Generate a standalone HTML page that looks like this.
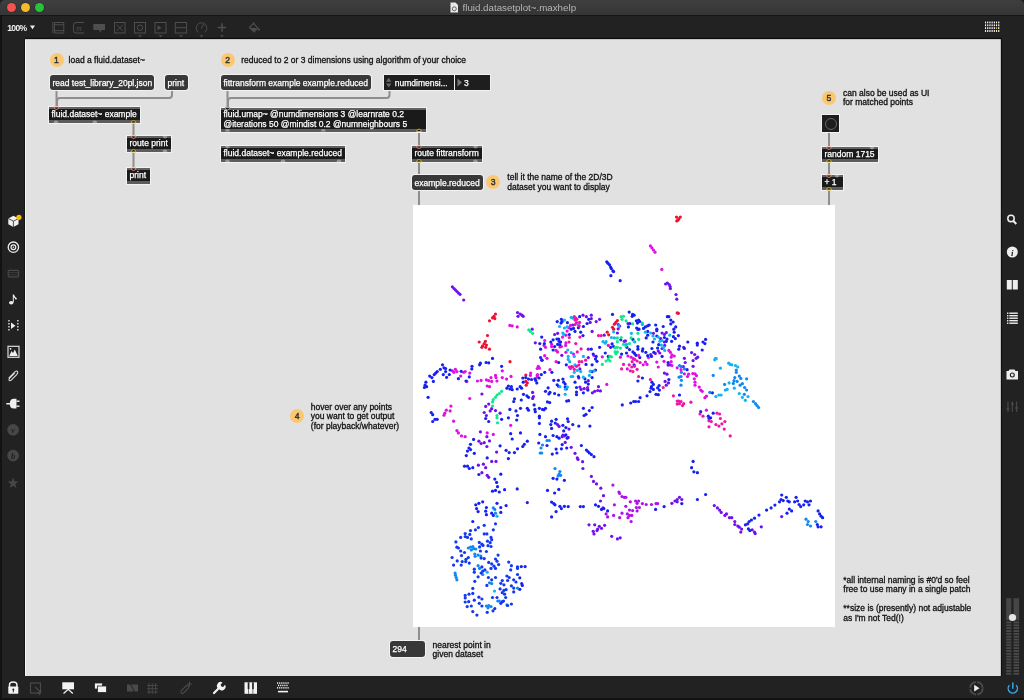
<!DOCTYPE html>
<html><head><meta charset="utf-8">
<style>
*{margin:0;padding:0;box-sizing:border-box}
html,body{-webkit-font-smoothing:antialiased;width:1024px;height:700px;overflow:hidden;background:#1e1e1e;font-family:"Liberation Sans",sans-serif}
.a{position:absolute}
#wrap{position:absolute;left:0;top:0;width:1024px;height:700px;will-change:transform}
#title{left:0;top:0;width:1024px;height:16px;background:linear-gradient(#3f3f3f,#353535);border-bottom:1px solid #151515;border-radius:5px 5px 0 0}
#tool{left:0;top:16px;width:1024px;height:23px;background:#222}
#canvas{left:25px;top:39px;width:976px;height:637px;background:#e1e1e1;border-top:1.5px solid #f6f6f6;border-left:1.5px solid #f6f6f6;border-right:1.3px solid #efefef}
#lside{left:0;top:39px;width:25px;height:637px;background:#222}
#rside{left:1001px;top:39px;width:23px;height:637px;background:#222}
#bot{left:0;top:676px;width:1024px;height:24px;background:#222}
.tl{width:9px;height:9px;border-radius:50%;top:3.2px;box-shadow:0 0 0 0.5px rgba(0,0,0,0.35)}
.t{font-size:8.5px;color:#111;white-space:nowrap;line-height:9.5px;-webkit-text-stroke:0.3px #111}
.num{width:14px;height:14px;border-radius:50%;background:#fac873;font-size:8.6px;color:#333;text-align:center;line-height:14px;-webkit-text-stroke:0.45px #333}
.msg{background:#383838;border-radius:3px;box-shadow:0 0 0 1px #f2f2f2;color:#fff;-webkit-text-stroke:0.25px #fff;font-size:8.5px;line-height:15px;padding-top:0.7px;padding-left:2.5px;white-space:nowrap}
.obj{background:#1a1a1a;border-top:2.6px solid #626262;border-bottom:3px solid #5c5c5c;padding-top:0.6px;box-shadow:0 0 0 1px #f2f2f2;color:#fff;-webkit-text-stroke:0.25px #fff;font-size:8.5px;line-height:9.5px;padding-left:2.5px;white-space:nowrap}
.cord{background:#8e8e8e}
.dot{position:absolute;width:3px;height:3px;border-radius:50%}
</style></head><body><div id="wrap">
<div id="title" class="a"></div>
<div class="a tl" style="left:6.5px;background:#f4544d"></div>
<div class="a tl" style="left:20.5px;background:#f5bb2c"></div>
<div class="a tl" style="left:35px;background:#26c33a"></div>
<div class="a" style="left:462.5px;top:2px;font-size:9.75px;color:#b5b5b5;white-space:nowrap">fluid.datasetplot~.maxhelp</div>
<div id="tool" class="a"></div>
<div class="a" style="left:7.2px;top:22.5px;font-size:8.6px;font-weight:bold;letter-spacing:-0.65px;color:#f0f0f0;white-space:nowrap">100%</div><svg class="a" style="left:29px;top:24px" width="7" height="7"><path d="M1 1.5 H6 L3.5 5.2Z" fill="#f0f0f0"/></svg>
<div id="lside" class="a"></div>
<div id="rside" class="a"></div>
<div id="bot" class="a"></div>
<div id="canvas" class="a"></div>

<!--CHROME-->
<svg class="a" style="left:0;top:0" width="1024" height="700" viewBox="0 0 1024 700">
<!-- window left border -->
<rect x="0" y="15" width="2" height="685" fill="#121212"/>
<rect x="24" y="39" width="1" height="637" fill="#151515"/>
<rect x="25" y="37.8" width="977" height="1.4" fill="#0e0e0e"/><rect x="1000.8" y="39" width="1.2" height="637" fill="#0e0e0e"/>
<rect x="0" y="698" width="1024" height="2" fill="#121212"/>
<!-- title doc icon -->
<path d="M450.5 2.5 H455.5 L458 5 V12.5 H450.5 Z" fill="#e8e8e8"/>
<circle cx="454.3" cy="8.8" r="2" fill="none" stroke="#555" stroke-width="0.9"/>
<!-- toolbar icons -->
<g fill="none" stroke="#4e4e4e" stroke-width="1">
<path d="M52.8 22 V33"/>
<path d="M54.5 22.5 H63.8 M54.5 24.8 H63.8 M54.5 30.7 H63.8 M54.5 33 H63.8 M63.8 22.5 V33 M54.5 22.5 V33"/>
<path d="M84 22.5 H76 Q73.5 22.5 73.5 25 V30.5 Q73.5 33 76 33 H84"/>
<rect x="114.5" y="22.5" width="10.5" height="10.5"/>
<path d="M116.8 24.8 L122.7 30.7 M122.7 24.8 L116.8 30.7"/>
<rect x="134.5" y="22.5" width="11" height="10.5"/>
<circle cx="140" cy="27.7" r="2.7"/>
<rect x="155" y="22.5" width="11" height="10.5"/>
<rect x="175.3" y="22.5" width="11.3" height="10.5"/>
<path d="M175.3 27.7 H186.6"/>
<path d="M198.3 32.3 A5.3 5.3 0 1 1 204.7 32.3"/>
<path d="M201.2 28.5 L203.6 24"/>
<path d="M222 23.3 V31.7 M217.8 27.5 H226.2" stroke-width="1.5"/>
</g>
<g fill="#4e4e4e">
<text x="76.2" y="30.8" font-family="Liberation Serif" font-style="italic" font-size="7.5" fill="#4e4e4e">m</text>
<path d="M93.3 24 H105 V30 H101.5 L100.5 32.5 L99 30 H93.3Z"/>
<path d="M157.5 25.2 L161.5 27.7 L157.5 30.2Z"/>
<path d="M138 35.3 H142 L140 37.3Z M158.5 35.3 H162.5 L160.5 37.3Z M179 35.3 H183 L181 37.3Z M199.5 35.3 H203.5 L201.5 37.3Z M220 35.3 H224 L222 37.3Z"/>
<path d="M249.5 27.5 L253.5 23.5 L258 28 L254 32 Z" fill="none" stroke="#4e4e4e" stroke-width="1.1"/>
<path d="M250.5 28 H257 L254 31.2Z"/>
<path d="M253 22 L254.5 23.5" stroke="#4e4e4e" stroke-width="1"/>
<circle cx="259" cy="29.5" r="1.1"/>
</g>
<!-- grid icon right -->
<rect x="983.8" y="20.6" width="15.6" height="11.6" rx="1" fill="#151515"/>
<g fill="#f4f4f4">
<rect x="984.90" y="21.50" width="1.25" height="1.9" fill="#f2f2f2"/><rect x="987.10" y="21.50" width="1.25" height="1.9" fill="#f2f2f2"/><rect x="989.30" y="21.50" width="1.25" height="1.9" fill="#f2f2f2"/><rect x="991.50" y="21.50" width="1.25" height="1.9" fill="#f2f2f2"/><rect x="993.70" y="21.50" width="1.25" height="1.9" fill="#f2f2f2"/><rect x="995.90" y="21.50" width="1.25" height="1.9" fill="#f2f2f2"/><rect x="998.10" y="21.50" width="1.25" height="1.9" fill="#f2f2f2"/><rect x="984.90" y="24.35" width="1.25" height="1.9" fill="#f2f2f2"/><rect x="987.10" y="24.35" width="1.25" height="1.9" fill="#f2f2f2"/><rect x="989.30" y="24.35" width="1.25" height="1.9" fill="#f2f2f2"/><rect x="991.50" y="24.35" width="1.25" height="1.9" fill="#f2f2f2"/><rect x="993.70" y="24.35" width="1.25" height="1.9" fill="#f2f2f2"/><rect x="995.90" y="24.35" width="1.25" height="1.9" fill="#f2f2f2"/><rect x="998.10" y="24.35" width="1.25" height="1.9" fill="#f2f2f2"/><rect x="984.90" y="27.20" width="1.25" height="1.9" fill="#f2f2f2"/><rect x="987.10" y="27.20" width="1.25" height="1.9" fill="#f2f2f2"/><rect x="989.30" y="27.20" width="1.25" height="1.9" fill="#f2f2f2"/><rect x="991.50" y="27.20" width="1.25" height="1.9" fill="#f2f2f2"/><rect x="993.70" y="27.20" width="1.25" height="1.9" fill="#f2f2f2"/><rect x="995.90" y="27.20" width="1.25" height="1.9" fill="#f5b300"/><rect x="998.10" y="27.20" width="1.25" height="1.9" fill="#f2f2f2"/><rect x="984.90" y="30.05" width="1.25" height="1.9" fill="#f2f2f2"/><rect x="987.10" y="30.05" width="1.25" height="1.9" fill="#f2f2f2"/><rect x="989.30" y="30.05" width="1.25" height="1.9" fill="#f2f2f2"/><rect x="991.50" y="30.05" width="1.25" height="1.9" fill="#f2f2f2"/><rect x="993.70" y="30.05" width="1.25" height="1.9" fill="#f2f2f2"/><rect x="995.90" y="30.05" width="1.25" height="1.9" fill="#f2f2f2"/><rect x="998.10" y="30.05" width="1.25" height="1.9" fill="#f2f2f2"/>
</g>
<!-- left sidebar icons -->
<g fill="#f0f0f0">
<path d="M13.4 215.8 L18.5 218.5 V224.3 L13.4 227 L8.3 224.3 V218.5Z"/>
</g>
<path d="M8.3 218.5 L13.4 221.2 L18.5 218.5 M13.4 221.2 V227" fill="none" stroke="#222" stroke-width="0.8"/>
<circle cx="18.9" cy="217.3" r="2.6" fill="#f5c000"/>
<circle cx="13.4" cy="247.2" r="5.2" fill="none" stroke="#eee" stroke-width="1.3"/>
<circle cx="13.4" cy="247.2" r="2.4" fill="none" stroke="#eee" stroke-width="1.2"/>
<circle cx="13.4" cy="247.2" r="0.8" fill="#eee"/>
<rect x="8.2" y="270.3" width="10.5" height="6.5" rx="1" fill="none" stroke="#484848" stroke-width="1.2"/>
<path d="M8.2 272.5 H18.7 M8.2 274.6 H18.7" stroke="#484848" stroke-width="0.6"/>
<g fill="#eee">
<ellipse cx="11.2" cy="302.8" rx="2.2" ry="1.7"/>
<path d="M12.8 302.5 V294.5 L13.8 294.5 Q15 297 17 298.5 Q16.5 300 15.5 299.5 Q14.5 297.8 13.8 297.2 V302.5Z"/>
<path d="M8.3 320 h1.3 v1.5 h-1.3z M8.3 323 h1.3 v1.5 h-1.3z M8.3 326 h1.3 v1.5 h-1.3z M8.3 329 h1.3 v1.5 h-1.3z M17.2 320 h1.3 v1.5 h-1.3z M17.2 323 h1.3 v1.5 h-1.3z M17.2 326 h1.3 v1.5 h-1.3z M17.2 329 h1.3 v1.5 h-1.3z"/>
<path d="M11 322.5 L15.5 325.7 L11 329Z"/>
</g>
<rect x="8" y="346.3" width="11" height="11" fill="none" stroke="#ddd" stroke-width="1.2"/>
<path d="M9.2 356 L11.5 351 L13 353 L14.8 349.5 L17.8 356Z" fill="#eee"/>
<circle cx="10.5" cy="348.8" r="0.9" fill="#eee"/>
<path d="M10 380 L16.5 373.5 Q18.2 372 19 373.5 Q19.5 375 18 376.5 L12.5 382 Q11.3 383 10.5 382.2 Q9.8 381.3 11 380 L16 375" fill="none" stroke="#ddd" stroke-width="1.1" transform="translate(-1.3,-1.8)"/>
<g fill="#f0f0f0">
<path d="M16.5 398.8 H13.8 Q9.8 398.8 9.8 403.7 Q9.8 408.6 13.8 408.6 H16.5Z"/>
<rect x="16.5" y="400.5" width="3" height="1.4"/>
<rect x="16.5" y="405.5" width="3" height="1.4"/>
<rect x="6.3" y="403" width="4.5" height="1.5"/>
</g>
<circle cx="13.1" cy="429.8" r="5.5" fill="#474747" stroke="#4a4a4a" stroke-width="0.6"/>
<text x="13.1" y="432.8" text-anchor="middle" font-family="Liberation Serif" font-style="italic" font-weight="bold" font-size="8" fill="#222">v</text>
<circle cx="13.1" cy="455.5" r="5.5" fill="#474747" stroke="#4a4a4a" stroke-width="0.6"/>
<text x="13.1" y="458.8" text-anchor="middle" font-family="Liberation Serif" font-style="italic" font-weight="bold" font-size="8.5" fill="#222">b</text>
<path d="M13.1 477.5 L14.5 481.3 L18.5 481.5 L15.3 484 L16.4 488 L13.1 485.7 L9.8 488 L10.9 484 L7.7 481.5 L11.7 481.3Z" fill="#464646"/>
<!-- right sidebar icons -->
<g fill="none" stroke="#eee" stroke-width="1.5">
<circle cx="1011" cy="218.5" r="3.2"/>
<path d="M1013.4 221 L1016.3 224" stroke-width="2"/>
</g>
<circle cx="1012.3" cy="252" r="5.5" fill="#eee"/>
<text x="1012.3" y="255.8" text-anchor="middle" font-family="Liberation Serif" font-style="italic" font-weight="bold" font-size="9" fill="#222">i</text>
<path d="M1006.8 280 H1011.8 V289.5 H1006.8Z M1012.8 280 H1017.8 V289.5 H1012.8Z" fill="#eee"/>
<g fill="#eee">
<rect x="1007" y="312.5" width="1.4" height="1.4"/><rect x="1009.3" y="312.5" width="8.5" height="1.4"/>
<rect x="1007" y="315" width="1.4" height="1.4"/><rect x="1009.3" y="315" width="8.5" height="1.4"/>
<rect x="1007" y="317.5" width="1.4" height="1.4"/><rect x="1009.3" y="317.5" width="8.5" height="1.4"/>
<rect x="1007" y="320" width="1.4" height="1.4"/><rect x="1009.3" y="320" width="8.5" height="1.4"/>
<rect x="1007" y="322.5" width="1.4" height="1.4"/><rect x="1009.3" y="322.5" width="8.5" height="1.4"/>
</g>
<path d="M1006.5 371 H1008.5 L1009.5 369.5 H1014.5 L1015.5 371 H1018 V379.5 H1006.5Z" fill="#eee"/>
<circle cx="1012.3" cy="375" r="2.5" fill="#222"/>
<circle cx="1012.3" cy="375" r="1.4" fill="#eee"/>
<g stroke="#4a4a4a" stroke-width="1.1">
<path d="M1008 401.5 V412 M1012.3 401.5 V412 M1016.6 401.5 V412"/>
<path d="M1006.6 409 H1009.4 M1010.9 404 H1013.7 M1015.2 408 H1018" stroke-width="1.6"/>
</g>
<!-- meter -->
<rect x="1006.2" y="598.2" width="5.1" height="22" fill="#464646"/>
<rect x="1013.6" y="598.2" width="5.5" height="22" fill="#464646"/>
<rect x="1006.2" y="621.5" width="5.1" height="1.9" fill="#4a4a4a"/><rect x="1013.6" y="621.5" width="5.5" height="1.9" fill="#4a4a4a"/><rect x="1006.2" y="624.4" width="5.1" height="1.9" fill="#4a4a4a"/><rect x="1013.6" y="624.4" width="5.5" height="1.9" fill="#4a4a4a"/><rect x="1006.2" y="627.2" width="5.1" height="1.9" fill="#4a4a4a"/><rect x="1013.6" y="627.2" width="5.5" height="1.9" fill="#4a4a4a"/><rect x="1006.2" y="630.1" width="5.1" height="1.9" fill="#4a4a4a"/><rect x="1013.6" y="630.1" width="5.5" height="1.9" fill="#4a4a4a"/><rect x="1006.2" y="632.9" width="5.1" height="1.9" fill="#4a4a4a"/><rect x="1013.6" y="632.9" width="5.5" height="1.9" fill="#4a4a4a"/><rect x="1006.2" y="635.8" width="5.1" height="1.9" fill="#4a4a4a"/><rect x="1013.6" y="635.8" width="5.5" height="1.9" fill="#4a4a4a"/><rect x="1006.2" y="638.6" width="5.1" height="1.9" fill="#4a4a4a"/><rect x="1013.6" y="638.6" width="5.5" height="1.9" fill="#4a4a4a"/><rect x="1006.2" y="641.5" width="5.1" height="1.9" fill="#4a4a4a"/><rect x="1013.6" y="641.5" width="5.5" height="1.9" fill="#4a4a4a"/><rect x="1006.2" y="644.3" width="5.1" height="1.9" fill="#4a4a4a"/><rect x="1013.6" y="644.3" width="5.5" height="1.9" fill="#4a4a4a"/><rect x="1006.2" y="647.2" width="5.1" height="1.9" fill="#4a4a4a"/><rect x="1013.6" y="647.2" width="5.5" height="1.9" fill="#4a4a4a"/><rect x="1006.2" y="650.0" width="5.1" height="1.9" fill="#4a4a4a"/><rect x="1013.6" y="650.0" width="5.5" height="1.9" fill="#4a4a4a"/><rect x="1006.2" y="652.9" width="5.1" height="1.9" fill="#4a4a4a"/><rect x="1013.6" y="652.9" width="5.5" height="1.9" fill="#4a4a4a"/><rect x="1006.2" y="655.7" width="5.1" height="1.9" fill="#4a4a4a"/><rect x="1013.6" y="655.7" width="5.5" height="1.9" fill="#4a4a4a"/><rect x="1006.2" y="658.6" width="5.1" height="1.9" fill="#4a4a4a"/><rect x="1013.6" y="658.6" width="5.5" height="1.9" fill="#4a4a4a"/><rect x="1006.2" y="661.4" width="5.1" height="1.9" fill="#4a4a4a"/><rect x="1013.6" y="661.4" width="5.5" height="1.9" fill="#4a4a4a"/><rect x="1006.2" y="664.3" width="5.1" height="1.9" fill="#4a4a4a"/><rect x="1013.6" y="664.3" width="5.5" height="1.9" fill="#4a4a4a"/><rect x="1006.2" y="667.1" width="5.1" height="1.9" fill="#4a4a4a"/><rect x="1013.6" y="667.1" width="5.5" height="1.9" fill="#4a4a4a"/><rect x="1006.2" y="670.0" width="5.1" height="1.9" fill="#4a4a4a"/><rect x="1013.6" y="670.0" width="5.5" height="1.9" fill="#4a4a4a"/><rect x="1006.2" y="672.8" width="5.1" height="1.9" fill="#4a4a4a"/><rect x="1013.6" y="672.8" width="5.5" height="1.9" fill="#4a4a4a"/>
<circle cx="1012.5" cy="617.5" r="3.6" fill="#e6e6e6"/>
<!-- play + power -->
<circle cx="976.4" cy="688.2" r="6.3" fill="none" stroke="#4a4a4a" stroke-width="2" stroke-dasharray="8.5 1.4"/>
<path d="M974.2 684.8 L979.5 688.2 L974.2 691.6Z" fill="#f0f0f0"/>
<path d="M1009.4 685.3 A4.6 4.6 0 1 0 1016.2 685.3" fill="none" stroke="#3aa5e6" stroke-width="1.5"/>
<path d="M1012.8 682.5 V688.8" stroke="#3aa5e6" stroke-width="1.5"/>
<!-- bottom toolbar icons -->
<g fill="#f2f2f2">
<path d="M9.5 687 V685 Q9.5 682 13.2 682 Q16.9 682 16.9 685 V687" fill="none" stroke="#f2f2f2" stroke-width="1.5"/>
<rect x="8.3" y="686.5" width="10" height="7.3" rx="0.8"/>
</g>
<circle cx="13.3" cy="689.6" r="1" fill="#222"/><rect x="12.9" y="689.8" width="0.9" height="2.5" fill="#222"/>
<rect x="30.5" y="683" width="10" height="10" fill="none" stroke="#4a4a4a" stroke-width="1.2"/>
<path d="M35 687 L40.5 692 L38 692.5 L40 695" stroke="#4a4a4a" stroke-width="1.1" fill="none"/>
<rect x="62.3" y="682.3" width="11.7" height="7" fill="#f2f2f2"/>
<path d="M63.5 693.5 L68.2 689.3 L72.8 693.5" stroke="#f2f2f2" stroke-width="1.3" fill="none"/>
<rect x="94.5" y="683" width="8" height="6" fill="#f2f2f2" stroke="#222" stroke-width="0.8"/>
<rect x="97.5" y="686" width="9" height="6.5" fill="#f2f2f2" stroke="#222" stroke-width="0.8"/>
<rect x="127" y="684.5" width="11" height="7" fill="#4a4a4a"/>
<path d="M130 683 L135.5 694" stroke="#222" stroke-width="1"/>
<path d="M149 683 V694 M152.3 683 V694 M155.6 683 V694 M147 685.5 H158 M147 688.7 H158 M147 692 H158" stroke="#4a4a4a" stroke-width="0.9"/>
<path d="M181 691 L186 686 Q187.5 684.7 188.5 686 Q189.3 687.2 188 688.5 L183.5 693 Q182.3 694 181.3 693 Q180.5 692 181.5 691" fill="none" stroke="#4a4a4a" stroke-width="1.1"/>
<path d="M189.5 681.5 V686.5 M187 684 H192" stroke="#4a4a4a" stroke-width="1.1"/>
<path d="M214 693 L220 687" stroke="#f2f2f2" stroke-width="2.2" stroke-linecap="round"/>
<path d="M218.6 688.6 A3.4 3.4 0 0 1 222.5 682.6 L220.6 684.8 L221.4 686.4 L223.2 686.9 L225 684.8 A3.4 3.4 0 0 1 218.6 688.6Z" fill="#f2f2f2"/>
<rect x="244.5" y="682.3" width="12.5" height="11.5" fill="#f2f2f2"/>
<rect x="247.7" y="682.3" width="1.7" height="6.8" fill="#222"/><rect x="252.1" y="682.3" width="1.7" height="6.8" fill="#222"/>
<path d="M248.5 689 V693.8 M252.9 689 V693.8" stroke="#222" stroke-width="0.6"/>
<rect x="277.0" y="682.3" width="1.2" height="1.5" fill="#f2f2f2"/><rect x="279.1" y="682.3" width="1.2" height="1.5" fill="#f2f2f2"/><rect x="281.2" y="682.3" width="1.2" height="1.5" fill="#f2f2f2"/><rect x="283.3" y="682.3" width="1.2" height="1.5" fill="#f2f2f2"/><rect x="285.4" y="682.3" width="1.2" height="1.5" fill="#f2f2f2"/><rect x="287.5" y="682.3" width="1.2" height="1.5" fill="#f2f2f2"/><rect x="278.0" y="684.7" width="1.2" height="1.5" fill="#f2f2f2"/><rect x="280.1" y="684.7" width="1.2" height="1.5" fill="#f2f2f2"/><rect x="282.2" y="684.7" width="1.2" height="1.5" fill="#f2f2f2"/><rect x="284.3" y="684.7" width="1.2" height="1.5" fill="#f2f2f2"/><rect x="286.4" y="684.7" width="1.2" height="1.5" fill="#f2f2f2"/><rect x="277.0" y="687.1" width="1.2" height="1.5" fill="#f2f2f2"/><rect x="279.1" y="687.1" width="1.2" height="1.5" fill="#f2f2f2"/><rect x="281.2" y="687.1" width="1.2" height="1.5" fill="#f2f2f2"/><rect x="283.3" y="687.1" width="1.2" height="1.5" fill="#f2f2f2"/><rect x="285.4" y="687.1" width="1.2" height="1.5" fill="#f2f2f2"/><rect x="287.5" y="687.1" width="1.2" height="1.5" fill="#f2f2f2"/>
<rect x="278" y="690.8" width="10" height="1.6" fill="#f2f2f2"/>
</svg>
<!--/CHROME-->


<!-- cords -->
<svg class="a" style="left:0;top:0" width="1024" height="700" viewBox="0 0 1024 700">
<g fill="none" stroke="#8e8e8e" stroke-width="2">
<path d="M56.5 90 V107"/>
<path d="M172 90 V95 Q172 98 169 98 H60 Q57 98 57 101 V107"/>
<path d="M133.5 123 V136"/>
<path d="M133.5 152 V168"/>
<path d="M227.5 90 V107"/>
<path d="M389.5 90 V95 Q389.5 98 386.5 98 H231 Q228 98 228 101 V107"/>
<path d="M419 131 V146"/>
<path d="M419 162 V174.5"/>
<path d="M419 190 V205"/>
<path d="M419 627 V641"/>
<path d="M829 132 V147"/>
<path d="M829 162 V175"/>
<path d="M829 190 V205"/>
</g>
</svg>
<!-- numbers -->
<div class="a num" style="left:49.5px;top:53px">1</div>
<div class="a num" style="left:220.6px;top:53.4px">2</div>
<div class="a num" style="left:486.2px;top:174.6px">3</div>
<div class="a num" style="left:290.1px;top:409px">4</div>
<div class="a num" style="left:822px;top:91px">5</div>
<!-- comments -->
<div class="a t" style="left:68.6px;top:55.5px">load a fluid.dataset~</div>
<div class="a t" style="left:241.2px;top:55.5px">reduced to 2 or 3 dimensions using algorithm of your choice</div>
<div class="a t" style="left:507.3px;top:173px">tell it the name of the 2D/3D<br>dataset you want to display</div>
<div class="a t" style="left:310.8px;top:402.5px">hover over any points<br>you want to get output<br>(for playback/whatever)</div>
<div class="a t" style="left:843px;top:88.5px">can also be used as UI<br>for matched points</div>
<div class="a t" style="left:843.3px;top:575.5px">*all internal naming is #0'd so feel<br>free to use many in a single patch<br><br>**size is (presently) not adjustable<br>as I'm not Ted(!)</div>
<div class="a t" style="left:432.6px;top:640.5px">nearest point in<br>given dataset</div>
<!-- messages -->
<div class="a msg" style="left:50px;top:75px;width:104px;height:15px">read test_library_20pl.json</div>
<div class="a msg" style="left:165px;top:75px;width:23px;height:15px">print</div>
<div class="a msg" style="left:221px;top:75px;width:150px;height:15px">fittransform example example.reduced</div>
<div class="a msg" style="left:412px;top:175px;width:71px;height:15px">example.reduced</div>
<div class="a msg" style="left:390px;top:641px;width:35px;height:16px">294</div>
<!-- objects -->
<div class="a obj" style="left:49px;top:107px;width:91px;height:16px">fluid.dataset~ example</div>
<div class="a obj" style="left:127px;top:136px;width:44px;height:16px">route print</div>
<div class="a obj" style="left:127px;top:168px;width:23px;height:15.5px">print</div>
<div class="a obj" style="left:221px;top:107.5px;width:205px;height:24px">fluid.umap~ @numdimensions 3 @learnrate 0.2<br>@iterations 50 @mindist 0.2 @numneighbours 5</div>
<div class="a obj" style="left:221px;top:146px;width:124px;height:16px">fluid.dataset~ example.reduced</div>
<div class="a obj" style="left:412px;top:146px;width:69.5px;height:16px">route fittransform</div>
<div class="a obj" style="left:822px;top:147px;width:56px;height:15px">random 1715</div>
<div class="a obj" style="left:822px;top:175px;width:21px;height:15px">+ 1</div>
<!--IO-->
<svg class="a" style="left:0;top:0" width="1024" height="700" viewBox="0 0 1024 700">
<path d="M54.1 107.0 A2.4 2.4 0 0 0 58.9 107.0Z" fill="#1a1a1a" stroke="#e8927a" stroke-width="0.9"/>
<path d="M53.6 123.0 A2.4 2.4 0 0 1 58.4 123.0Z" fill="#9a9a9a"/>
<path d="M92.4 123.0 A2.4 2.4 0 0 1 97.2 123.0Z" fill="#9a9a9a"/>
<path d="M131.1 123.0 A2.4 2.4 0 0 1 135.9 123.0Z" fill="#1a1a1a" stroke="#e0b830" stroke-width="0.9"/>
<path d="M131.1 136.0 A2.4 2.4 0 0 0 135.9 136.0Z" fill="#1a1a1a" stroke="#e8927a" stroke-width="0.9"/>
<path d="M162.6 136.0 A2.4 2.4 0 0 0 167.4 136.0Z" fill="#9a9a9a"/>
<path d="M131.1 152.0 A2.4 2.4 0 0 1 135.9 152.0Z" fill="#1a1a1a" stroke="#e0b830" stroke-width="0.9"/>
<path d="M162.6 152.0 A2.4 2.4 0 0 1 167.4 152.0Z" fill="#9a9a9a"/>
<path d="M131.1 168.0 A2.4 2.4 0 0 0 135.9 168.0Z" fill="#1a1a1a" stroke="#e8927a" stroke-width="0.9"/>
<path d="M225.1 107.5 A2.4 2.4 0 0 0 229.9 107.5Z" fill="#1a1a1a" stroke="#e8927a" stroke-width="0.9"/>
<path d="M225.1 131.5 A2.4 2.4 0 0 1 229.9 131.5Z" fill="#9a9a9a"/>
<path d="M320.9 131.5 A2.4 2.4 0 0 1 325.7 131.5Z" fill="#9a9a9a"/>
<path d="M416.6 131.5 A2.4 2.4 0 0 1 421.4 131.5Z" fill="#1a1a1a" stroke="#e0b830" stroke-width="0.9"/>
<path d="M225.1 146.0 A2.4 2.4 0 0 0 229.9 146.0Z" fill="#9a9a9a"/>
<path d="M225.1 162.0 A2.4 2.4 0 0 1 229.9 162.0Z" fill="#9a9a9a"/>
<path d="M280.6 162.0 A2.4 2.4 0 0 1 285.4 162.0Z" fill="#9a9a9a"/>
<path d="M336.6 162.0 A2.4 2.4 0 0 1 341.4 162.0Z" fill="#9a9a9a"/>
<path d="M416.6 146.0 A2.4 2.4 0 0 0 421.4 146.0Z" fill="#1a1a1a" stroke="#e8927a" stroke-width="0.9"/>
<path d="M473.1 146.0 A2.4 2.4 0 0 0 477.9 146.0Z" fill="#9a9a9a"/>
<path d="M416.6 162.0 A2.4 2.4 0 0 1 421.4 162.0Z" fill="#1a1a1a" stroke="#e0b830" stroke-width="0.9"/>
<path d="M473.1 162.0 A2.4 2.4 0 0 1 477.9 162.0Z" fill="#9a9a9a"/>
<path d="M826.6 147.0 A2.4 2.4 0 0 0 831.4 147.0Z" fill="#1a1a1a" stroke="#e8927a" stroke-width="0.9"/>
<path d="M869.6 147.0 A2.4 2.4 0 0 0 874.4 147.0Z" fill="#9a9a9a"/>
<path d="M826.6 162.0 A2.4 2.4 0 0 1 831.4 162.0Z" fill="#1a1a1a" stroke="#e0b830" stroke-width="0.9"/>
<path d="M826.6 175.0 A2.4 2.4 0 0 0 831.4 175.0Z" fill="#1a1a1a" stroke="#e8927a" stroke-width="0.9"/>
<path d="M834.6 175.0 A2.4 2.4 0 0 0 839.4 175.0Z" fill="#9a9a9a"/>
<path d="M826.6 190.0 A2.4 2.4 0 0 1 831.4 190.0Z" fill="#1a1a1a" stroke="#e0b830" stroke-width="0.9"/>
</svg>
<!--/IO-->
<!-- umenu + number -->
<div class="a" style="left:384px;top:75px;width:70px;height:15px;background:#1e1e1e;box-shadow:0 0 0 1px #f2f2f2"></div>
<div class="a" style="left:394.8px;top:75.5px;line-height:15px;font-size:8.5px;color:#fff;white-space:nowrap;-webkit-text-stroke:0.25px #fff">numdimensi...</div>
<svg class="a" style="left:385px;top:76px" width="8" height="13"><path d="M1 5.8 L3.7 1.8 L6.4 5.8Z M1 7.4 L3.7 11.4 L6.4 7.4Z" fill="#6a6a6a"/></svg>
<div class="a" style="left:455px;top:75px;width:35px;height:15px;background:#1e1e1e;box-shadow:0 0 0 1px #f2f2f2"></div>
<svg class="a" style="left:456px;top:76px" width="8" height="13"><path d="M1.5 2.5 L6 6.5 L1.5 10.5Z" fill="#777"/></svg>
<div class="a" style="left:464px;top:75.5px;line-height:15px;font-size:8.5px;color:#fff;-webkit-text-stroke:0.25px #fff">3</div>
<!-- button -->
<div class="a" style="left:822px;top:115px;width:17px;height:17px;background:#1e1e1e;box-shadow:0 0 0 1px #f2f2f2"></div>
<div class="a" style="left:824.5px;top:117.5px;width:12px;height:12px;border-radius:50%;border:1.3px solid #666"></div>
<!-- plot -->
<div class="a" id="plot" style="left:413px;top:205px;width:422px;height:422px;background:#fff"></div>
<!--DOTS-->
<svg class="a" style="left:413px;top:205px" width="422" height="422" viewBox="0 0 422 422">
<g fill="#7010f0"><circle cx="39.4" cy="81.8" r="1.6"/><circle cx="41.0" cy="83.5" r="1.6"/><circle cx="42.5" cy="85.0" r="1.6"/><circle cx="44.0" cy="86.5" r="1.6"/><circle cx="45.5" cy="88.0" r="1.6"/><circle cx="47.0" cy="89.3" r="1.6"/><circle cx="50.7" cy="95.0" r="1.6"/><circle cx="104.5" cy="107.5" r="1.6"/><circle cx="105.0" cy="111.3" r="1.6"/><circle cx="68.9" cy="189.0" r="1.6"/><circle cx="72.7" cy="201.4" r="1.6"/><circle cx="75.7" cy="199.1" r="1.6"/><circle cx="78.7" cy="203.7" r="1.6"/><circle cx="82.5" cy="205.6" r="1.6"/><circle cx="77.2" cy="205.9" r="1.6"/><circle cx="87.1" cy="208.2" r="1.6"/><circle cx="71.2" cy="207.5" r="1.6"/><circle cx="73.4" cy="210.5" r="1.6"/><circle cx="67.4" cy="226.8" r="1.6"/><circle cx="73.9" cy="231.7" r="1.6"/><circle cx="76.5" cy="235.9" r="1.6"/><circle cx="65.9" cy="236.2" r="1.6"/><circle cx="68.1" cy="238.5" r="1.6"/><circle cx="71.2" cy="237.7" r="1.6"/><circle cx="73.9" cy="241.5" r="1.6"/><circle cx="83.6" cy="247.1" r="1.6"/><circle cx="78.7" cy="256.4" r="1.6"/><circle cx="83.0" cy="256.4" r="1.6"/><circle cx="65.4" cy="260.2" r="1.6"/><circle cx="70.4" cy="259.2" r="1.6"/><circle cx="72.7" cy="262.7" r="1.6"/><circle cx="68.9" cy="267.7" r="1.6"/><circle cx="74.2" cy="270.3" r="1.6"/><circle cx="75.7" cy="272.3" r="1.6"/><circle cx="107.1" cy="109.0" r="1.6"/><circle cx="109.0" cy="110.2" r="1.6"/><circle cx="110.2" cy="111.3" r="1.6"/><circle cx="119.2" cy="124.2" r="1.6"/><circle cx="141.6" cy="129.5" r="1.6"/><circle cx="144.6" cy="128.3" r="1.6"/><circle cx="122.3" cy="137.8" r="1.6"/><circle cx="148.8" cy="150.3" r="1.6"/><circle cx="170.0" cy="110.2" r="1.6"/><circle cx="173.4" cy="111.7" r="1.6"/><circle cx="178.3" cy="110.2" r="1.6"/><circle cx="178.3" cy="113.6" r="1.6"/><circle cx="177.2" cy="117.4" r="1.6"/><circle cx="183.2" cy="116.6" r="1.6"/><circle cx="186.6" cy="114.3" r="1.6"/><circle cx="179.1" cy="126.4" r="1.6"/><circle cx="191.2" cy="130.2" r="1.6"/><circle cx="204.4" cy="128.0" r="1.6"/><circle cx="205.2" cy="119.6" r="1.6"/><circle cx="206.7" cy="121.1" r="1.6"/><circle cx="205.2" cy="123.8" r="1.6"/><circle cx="207.8" cy="134.8" r="1.6"/><circle cx="211.2" cy="136.3" r="1.6"/><circle cx="175.3" cy="144.2" r="1.6"/><circle cx="175.3" cy="152.6" r="1.6"/><circle cx="159.8" cy="120.0" r="1.6"/><circle cx="119.6" cy="187.4" r="1.6"/><circle cx="120.4" cy="191.6" r="1.6"/><circle cx="119.6" cy="193.4" r="1.6"/><circle cx="165.8" cy="173.0" r="1.6"/><circle cx="175.3" cy="175.7" r="1.6"/><circle cx="166.9" cy="182.1" r="1.6"/><circle cx="168.1" cy="184.4" r="1.6"/><circle cx="171.1" cy="183.6" r="1.6"/><circle cx="174.5" cy="182.5" r="1.6"/><circle cx="185.5" cy="181.7" r="1.6"/><circle cx="179.4" cy="187.8" r="1.6"/><circle cx="181.7" cy="186.3" r="1.6"/><circle cx="184.7" cy="185.5" r="1.6"/><circle cx="187.4" cy="185.9" r="1.6"/><circle cx="166.9" cy="163.9" r="1.6"/><circle cx="144.6" cy="219.6" r="1.6"/><circle cx="146.1" cy="221.4" r="1.6"/><circle cx="149.9" cy="230.2" r="1.6"/><circle cx="149.2" cy="231.7" r="1.6"/><circle cx="151.4" cy="230.9" r="1.6"/><circle cx="156.0" cy="224.1" r="1.6"/><circle cx="155.2" cy="232.4" r="1.6"/><circle cx="152.2" cy="237.4" r="1.6"/><circle cx="158.2" cy="242.3" r="1.6"/><circle cx="162.0" cy="248.3" r="1.6"/><circle cx="164.3" cy="252.9" r="1.6"/><circle cx="165.0" cy="254.4" r="1.6"/><circle cx="169.6" cy="256.7" r="1.6"/><circle cx="169.9" cy="263.5" r="1.6"/><circle cx="178.4" cy="271.4" r="1.6"/><circle cx="180.5" cy="276.4" r="1.6"/><circle cx="183.5" cy="278.9" r="1.6"/><circle cx="187.8" cy="283.2" r="1.6"/><circle cx="190.5" cy="290.7" r="1.6"/><circle cx="187.5" cy="296.0" r="1.6"/><circle cx="190.0" cy="302.9" r="1.6"/><circle cx="176.0" cy="319.8" r="1.6"/><circle cx="181.7" cy="319.8" r="1.6"/><circle cx="186.3" cy="321.3" r="1.6"/><circle cx="188.5" cy="323.3" r="1.6"/><circle cx="184.7" cy="324.1" r="1.6"/><circle cx="184.0" cy="325.6" r="1.6"/><circle cx="180.2" cy="326.3" r="1.6"/><circle cx="181.0" cy="328.9" r="1.6"/><circle cx="191.6" cy="320.3" r="1.6"/><circle cx="198.7" cy="331.3" r="1.6"/><circle cx="204.4" cy="333.9" r="1.6"/><circle cx="207.2" cy="332.8" r="1.6"/><circle cx="252.6" cy="79.0" r="1.6"/><circle cx="254.4" cy="78.0" r="1.6"/><circle cx="256.2" cy="79.5" r="1.6"/><circle cx="257.1" cy="81.5" r="1.6"/><circle cx="257.4" cy="83.6" r="1.6"/><circle cx="263.0" cy="89.6" r="1.6"/><circle cx="263.8" cy="94.2" r="1.6"/><circle cx="224.9" cy="124.5" r="1.6"/><circle cx="240.4" cy="128.3" r="1.6"/><circle cx="249.1" cy="128.0" r="1.6"/><circle cx="253.3" cy="127.6" r="1.6"/><circle cx="251.4" cy="129.5" r="1.6"/><circle cx="247.6" cy="133.6" r="1.6"/><circle cx="251.4" cy="137.0" r="1.6"/><circle cx="251.7" cy="140.4" r="1.6"/><circle cx="249.1" cy="143.5" r="1.6"/><circle cx="245.3" cy="146.1" r="1.6"/><circle cx="242.3" cy="148.4" r="1.6"/><circle cx="237.7" cy="149.5" r="1.6"/><circle cx="246.8" cy="148.0" r="1.6"/><circle cx="215.0" cy="118.5" r="1.6"/><circle cx="212.4" cy="135.9" r="1.6"/><circle cx="270.7" cy="142.3" r="1.6"/><circle cx="278.6" cy="147.6" r="1.6"/><circle cx="281.7" cy="149.5" r="1.6"/><circle cx="284.7" cy="152.2" r="1.6"/><circle cx="283.2" cy="153.3" r="1.6"/><circle cx="271.4" cy="153.3" r="1.6"/><circle cx="280.1" cy="155.6" r="1.6"/><circle cx="272.2" cy="157.5" r="1.6"/><circle cx="255.1" cy="160.1" r="1.6"/><circle cx="257.0" cy="159.8" r="1.6"/><circle cx="251.4" cy="168.1" r="1.6"/><circle cx="254.0" cy="169.2" r="1.6"/><circle cx="252.1" cy="176.4" r="1.6"/><circle cx="255.5" cy="177.9" r="1.6"/><circle cx="253.3" cy="180.2" r="1.6"/><circle cx="280.1" cy="161.3" r="1.6"/><circle cx="270.3" cy="161.6" r="1.6"/><circle cx="258.9" cy="298.3" r="1.6"/><circle cx="262.0" cy="296.0" r="1.6"/><circle cx="264.2" cy="294.5" r="1.6"/><circle cx="266.5" cy="292.3" r="1.6"/><circle cx="268.8" cy="294.5" r="1.6"/><circle cx="264.2" cy="296.8" r="1.6"/><circle cx="301.3" cy="300.6" r="1.6"/><circle cx="304.4" cy="302.9" r="1.6"/><circle cx="306.6" cy="305.1" r="1.6"/><circle cx="308.2" cy="307.4" r="1.6"/><circle cx="311.9" cy="310.4" r="1.6"/><circle cx="313.5" cy="308.9" r="1.6"/><circle cx="316.5" cy="312.7" r="1.6"/><circle cx="368.7" cy="311.6" r="1.6"/><circle cx="318.8" cy="312.7" r="1.6"/><circle cx="321.8" cy="316.5" r="1.6"/><circle cx="321.8" cy="319.5" r="1.6"/><circle cx="324.8" cy="321.0" r="1.6"/><circle cx="326.3" cy="322.2" r="1.6"/><circle cx="328.6" cy="324.1" r="1.6"/><circle cx="327.8" cy="327.1" r="1.6"/><circle cx="339.2" cy="324.8" r="1.6"/><circle cx="341.5" cy="327.1" r="1.6"/><circle cx="342.2" cy="328.6" r="1.6"/><circle cx="348.3" cy="321.8" r="1.6"/></g>
<g fill="#f01030"><circle cx="82.5" cy="109.0" r="1.6"/><circle cx="81.0" cy="111.3" r="1.6"/><circle cx="81.8" cy="113.6" r="1.6"/><circle cx="79.5" cy="112.8" r="1.6"/><circle cx="76.5" cy="115.8" r="1.6"/><circle cx="74.5" cy="130.5" r="1.6"/><circle cx="66.2" cy="137.0" r="1.6"/><circle cx="72.4" cy="136.3" r="1.6"/><circle cx="71.2" cy="138.6" r="1.6"/><circle cx="69.7" cy="140.8" r="1.6"/><circle cx="73.4" cy="140.1" r="1.6"/><circle cx="68.9" cy="142.3" r="1.6"/><circle cx="72.7" cy="142.3" r="1.6"/><circle cx="76.5" cy="144.2" r="1.6"/><circle cx="97.0" cy="156.7" r="1.6"/><circle cx="204.4" cy="115.5" r="1.6"/><circle cx="202.9" cy="117.4" r="1.6"/><circle cx="201.4" cy="119.2" r="1.6"/><circle cx="199.5" cy="122.3" r="1.6"/><circle cx="200.6" cy="124.2" r="1.6"/><circle cx="194.2" cy="127.2" r="1.6"/><circle cx="195.7" cy="129.8" r="1.6"/><circle cx="112.8" cy="170.0" r="1.6"/><circle cx="112.8" cy="176.4" r="1.6"/><circle cx="114.3" cy="177.9" r="1.6"/><circle cx="113.2" cy="180.2" r="1.6"/><circle cx="124.2" cy="170.7" r="1.6"/><circle cx="263.5" cy="12.1" r="1.6"/><circle cx="267.3" cy="12.1" r="1.6"/><circle cx="265.8" cy="13.9" r="1.6"/><circle cx="263.8" cy="15.9" r="1.6"/><circle cx="265.0" cy="15.1" r="1.6"/><circle cx="264.2" cy="107.9" r="1.6"/><circle cx="265.4" cy="108.3" r="1.6"/></g>
<g fill="#e010e4"><circle cx="96.9" cy="120.4" r="1.6"/><circle cx="99.2" cy="120.8" r="1.6"/><circle cx="104.2" cy="121.9" r="1.6"/><circle cx="39.4" cy="165.8" r="1.6"/><circle cx="42.4" cy="164.3" r="1.6"/><circle cx="43.9" cy="166.6" r="1.6"/><circle cx="40.9" cy="167.3" r="1.6"/><circle cx="47.7" cy="171.1" r="1.6"/><circle cx="50.7" cy="167.3" r="1.6"/><circle cx="52.2" cy="166.6" r="1.6"/><circle cx="56.8" cy="168.1" r="1.6"/><circle cx="53.8" cy="176.4" r="1.6"/><circle cx="64.4" cy="176.0" r="1.6"/><circle cx="68.1" cy="175.4" r="1.6"/><circle cx="73.4" cy="174.9" r="1.6"/><circle cx="75.7" cy="175.7" r="1.6"/><circle cx="78.0" cy="172.6" r="1.6"/><circle cx="82.5" cy="170.4" r="1.6"/><circle cx="83.0" cy="172.6" r="1.6"/><circle cx="78.7" cy="176.4" r="1.6"/><circle cx="84.0" cy="176.0" r="1.6"/><circle cx="89.3" cy="165.8" r="1.6"/><circle cx="89.3" cy="172.6" r="1.6"/><circle cx="93.6" cy="174.1" r="1.6"/><circle cx="98.0" cy="171.4" r="1.6"/><circle cx="74.2" cy="181.0" r="1.6"/><circle cx="76.5" cy="181.7" r="1.6"/><circle cx="56.8" cy="193.5" r="1.6"/><circle cx="37.9" cy="201.1" r="1.6"/><circle cx="37.1" cy="205.9" r="1.6"/><circle cx="33.3" cy="205.2" r="1.6"/><circle cx="31.8" cy="208.2" r="1.6"/><circle cx="31.0" cy="210.2" r="1.6"/><circle cx="40.6" cy="216.2" r="1.6"/><circle cx="43.9" cy="225.6" r="1.6"/><circle cx="45.4" cy="227.9" r="1.6"/><circle cx="48.5" cy="230.9" r="1.6"/><circle cx="52.2" cy="231.7" r="1.6"/><circle cx="97.7" cy="220.3" r="1.6"/><circle cx="80.3" cy="229.4" r="1.6"/><circle cx="74.2" cy="227.9" r="1.6"/><circle cx="157.5" cy="120.4" r="1.6"/><circle cx="156.0" cy="122.7" r="1.6"/><circle cx="154.1" cy="126.1" r="1.6"/><circle cx="149.5" cy="132.1" r="1.6"/><circle cx="152.9" cy="130.2" r="1.6"/><circle cx="131.7" cy="135.5" r="1.6"/><circle cx="131.0" cy="140.4" r="1.6"/><circle cx="132.5" cy="142.3" r="1.6"/><circle cx="138.6" cy="139.3" r="1.6"/><circle cx="138.6" cy="141.6" r="1.6"/><circle cx="143.1" cy="145.4" r="1.6"/><circle cx="146.9" cy="142.0" r="1.6"/><circle cx="148.4" cy="141.6" r="1.6"/><circle cx="152.9" cy="137.8" r="1.6"/><circle cx="152.6" cy="140.4" r="1.6"/><circle cx="152.9" cy="147.3" r="1.6"/><circle cx="131.7" cy="150.7" r="1.6"/><circle cx="134.0" cy="153.3" r="1.6"/><circle cx="143.1" cy="156.7" r="1.6"/><circle cx="128.7" cy="155.2" r="1.6"/><circle cx="163.5" cy="117.7" r="1.6"/><circle cx="189.3" cy="151.8" r="1.6"/><circle cx="207.4" cy="152.2" r="1.6"/><circle cx="181.0" cy="150.7" r="1.6"/><circle cx="160.5" cy="149.1" r="1.6"/><circle cx="125.3" cy="161.3" r="1.6"/><circle cx="124.2" cy="163.5" r="1.6"/><circle cx="126.4" cy="163.2" r="1.6"/><circle cx="137.0" cy="164.7" r="1.6"/><circle cx="117.7" cy="168.1" r="1.6"/><circle cx="117.4" cy="170.4" r="1.6"/><circle cx="124.5" cy="169.6" r="1.6"/><circle cx="124.2" cy="172.2" r="1.6"/><circle cx="156.3" cy="162.0" r="1.6"/><circle cx="157.5" cy="163.5" r="1.6"/><circle cx="193.8" cy="179.4" r="1.6"/><circle cx="174.1" cy="184.0" r="1.6"/><circle cx="237.4" cy="40.9" r="1.6"/><circle cx="239.0" cy="42.9" r="1.6"/><circle cx="240.5" cy="45.0" r="1.6"/><circle cx="242.0" cy="47.2" r="1.6"/><circle cx="248.8" cy="64.4" r="1.6"/><circle cx="255.9" cy="145.4" r="1.6"/><circle cx="257.4" cy="147.3" r="1.6"/><circle cx="258.9" cy="149.9" r="1.6"/><circle cx="261.2" cy="151.0" r="1.6"/><circle cx="258.2" cy="152.2" r="1.6"/><circle cx="215.0" cy="151.0" r="1.6"/><circle cx="218.1" cy="152.2" r="1.6"/><circle cx="220.3" cy="153.7" r="1.6"/><circle cx="235.5" cy="152.6" r="1.6"/><circle cx="243.8" cy="157.1" r="1.6"/><circle cx="251.0" cy="156.3" r="1.6"/><circle cx="258.2" cy="156.7" r="1.6"/><circle cx="232.4" cy="157.1" r="1.6"/><circle cx="214.3" cy="163.9" r="1.6"/><circle cx="230.2" cy="159.8" r="1.6"/><circle cx="234.0" cy="159.4" r="1.6"/><circle cx="245.3" cy="162.0" r="1.6"/><circle cx="258.9" cy="160.5" r="1.6"/><circle cx="264.2" cy="162.8" r="1.6"/><circle cx="268.0" cy="164.7" r="1.6"/><circle cx="271.4" cy="168.8" r="1.6"/><circle cx="275.6" cy="169.2" r="1.6"/><circle cx="274.5" cy="171.5" r="1.6"/><circle cx="279.8" cy="168.5" r="1.6"/><circle cx="282.0" cy="168.8" r="1.6"/><circle cx="283.5" cy="170.7" r="1.6"/><circle cx="281.3" cy="173.8" r="1.6"/><circle cx="282.0" cy="177.2" r="1.6"/><circle cx="282.0" cy="180.2" r="1.6"/><circle cx="286.2" cy="182.1" r="1.6"/><circle cx="287.7" cy="185.1" r="1.6"/><circle cx="289.2" cy="186.3" r="1.6"/><circle cx="293.4" cy="191.2" r="1.6"/><circle cx="291.9" cy="192.7" r="1.6"/><circle cx="293.4" cy="205.2" r="1.6"/></g>
<g fill="#1620f0"><circle cx="29.5" cy="159.8" r="1.6"/><circle cx="31.0" cy="162.8" r="1.6"/><circle cx="32.6" cy="163.5" r="1.6"/><circle cx="27.3" cy="164.3" r="1.6"/><circle cx="24.2" cy="166.6" r="1.6"/><circle cx="22.7" cy="168.1" r="1.6"/><circle cx="21.2" cy="169.6" r="1.6"/><circle cx="16.7" cy="171.1" r="1.6"/><circle cx="18.9" cy="172.6" r="1.6"/><circle cx="20.4" cy="176.4" r="1.6"/><circle cx="12.9" cy="177.2" r="1.6"/><circle cx="12.1" cy="180.2" r="1.6"/><circle cx="11.4" cy="182.5" r="1.6"/><circle cx="13.6" cy="181.7" r="1.6"/><circle cx="32.6" cy="166.6" r="1.6"/><circle cx="30.3" cy="169.6" r="1.6"/><circle cx="33.6" cy="172.3" r="1.6"/><circle cx="37.1" cy="165.0" r="1.6"/><circle cx="36.3" cy="169.6" r="1.6"/><circle cx="45.4" cy="173.7" r="1.6"/><circle cx="48.2" cy="166.3" r="1.6"/><circle cx="53.0" cy="176.0" r="1.6"/><circle cx="56.3" cy="171.9" r="1.6"/><circle cx="59.0" cy="161.3" r="1.6"/><circle cx="58.8" cy="164.0" r="1.6"/><circle cx="66.6" cy="159.8" r="1.6"/><circle cx="67.4" cy="158.2" r="1.6"/><circle cx="73.1" cy="157.5" r="1.6"/><circle cx="75.7" cy="157.8" r="1.6"/><circle cx="79.5" cy="153.4" r="1.6"/><circle cx="88.6" cy="161.3" r="1.6"/><circle cx="15.1" cy="192.3" r="1.6"/><circle cx="18.2" cy="207.5" r="1.6"/><circle cx="19.7" cy="209.7" r="1.6"/><circle cx="95.4" cy="181.0" r="1.6"/><circle cx="98.4" cy="181.7" r="1.6"/><circle cx="96.9" cy="184.0" r="1.6"/><circle cx="99.2" cy="184.7" r="1.6"/><circle cx="104.2" cy="184.0" r="1.6"/><circle cx="101.5" cy="193.8" r="1.6"/><circle cx="100.7" cy="196.5" r="1.6"/><circle cx="96.9" cy="204.4" r="1.6"/><circle cx="103.0" cy="205.9" r="1.6"/><circle cx="104.5" cy="210.5" r="1.6"/><circle cx="93.9" cy="183.2" r="1.6"/><circle cx="19.7" cy="216.5" r="1.6"/><circle cx="22.0" cy="214.3" r="1.6"/><circle cx="24.2" cy="214.3" r="1.6"/><circle cx="72.7" cy="213.5" r="1.6"/><circle cx="75.7" cy="216.5" r="1.6"/><circle cx="88.6" cy="214.3" r="1.6"/><circle cx="95.4" cy="212.8" r="1.6"/><circle cx="103.7" cy="215.0" r="1.6"/><circle cx="97.7" cy="228.7" r="1.6"/><circle cx="99.2" cy="234.0" r="1.6"/><circle cx="60.6" cy="234.4" r="1.6"/><circle cx="57.5" cy="239.3" r="1.6"/><circle cx="56.0" cy="243.0" r="1.6"/><circle cx="54.5" cy="246.1" r="1.6"/><circle cx="57.5" cy="244.6" r="1.6"/><circle cx="61.3" cy="248.3" r="1.6"/><circle cx="53.3" cy="250.6" r="1.6"/><circle cx="87.1" cy="240.8" r="1.6"/><circle cx="93.1" cy="245.3" r="1.6"/><circle cx="96.2" cy="247.6" r="1.6"/><circle cx="101.5" cy="247.6" r="1.6"/><circle cx="104.5" cy="243.8" r="1.6"/><circle cx="95.4" cy="253.6" r="1.6"/><circle cx="74.2" cy="252.9" r="1.6"/><circle cx="51.5" cy="261.2" r="1.6"/><circle cx="54.5" cy="261.2" r="1.6"/><circle cx="56.3" cy="263.5" r="1.6"/><circle cx="59.8" cy="262.7" r="1.6"/><circle cx="65.9" cy="269.5" r="1.6"/><circle cx="87.8" cy="269.2" r="1.6"/><circle cx="81.8" cy="274.1" r="1.6"/><circle cx="83.6" cy="277.4" r="1.6"/><circle cx="84.5" cy="281.7" r="1.6"/><circle cx="79.5" cy="286.2" r="1.6"/><circle cx="82.5" cy="285.4" r="1.6"/><circle cx="86.3" cy="287.0" r="1.6"/><circle cx="91.6" cy="284.7" r="1.6"/><circle cx="104.2" cy="283.9" r="1.6"/><circle cx="62.8" cy="299.8" r="1.6"/><circle cx="65.9" cy="298.3" r="1.6"/><circle cx="69.7" cy="296.8" r="1.6"/><circle cx="63.6" cy="303.6" r="1.6"/><circle cx="65.1" cy="306.6" r="1.6"/><circle cx="73.4" cy="302.5" r="1.6"/><circle cx="72.7" cy="306.2" r="1.6"/><circle cx="73.4" cy="309.7" r="1.6"/><circle cx="84.0" cy="298.3" r="1.6"/><circle cx="87.8" cy="302.5" r="1.6"/><circle cx="93.1" cy="300.6" r="1.6"/><circle cx="87.8" cy="307.4" r="1.6"/><circle cx="78.7" cy="308.2" r="1.6"/><circle cx="80.3" cy="310.4" r="1.6"/><circle cx="59.8" cy="316.5" r="1.6"/><circle cx="193.8" cy="56.8" r="1.6"/><circle cx="195.0" cy="58.3" r="1.6"/><circle cx="196.5" cy="59.8" r="1.6"/><circle cx="197.6" cy="62.1" r="1.6"/><circle cx="198.4" cy="63.6" r="1.6"/><circle cx="199.9" cy="65.9" r="1.6"/><circle cx="200.6" cy="66.6" r="1.6"/><circle cx="197.9" cy="70.7" r="1.6"/><circle cx="207.2" cy="75.7" r="1.6"/><circle cx="128.7" cy="132.1" r="1.6"/><circle cx="144.2" cy="116.6" r="1.6"/><circle cx="148.4" cy="114.3" r="1.6"/><circle cx="149.1" cy="116.6" r="1.6"/><circle cx="148.0" cy="118.1" r="1.6"/><circle cx="154.4" cy="117.7" r="1.6"/><circle cx="140.1" cy="134.8" r="1.6"/><circle cx="137.8" cy="137.0" r="1.6"/><circle cx="143.9" cy="134.0" r="1.6"/><circle cx="145.7" cy="134.0" r="1.6"/><circle cx="146.1" cy="136.3" r="1.6"/><circle cx="144.6" cy="139.3" r="1.6"/><circle cx="147.6" cy="137.0" r="1.6"/><circle cx="146.9" cy="139.7" r="1.6"/><circle cx="141.6" cy="141.6" r="1.6"/><circle cx="140.1" cy="145.0" r="1.6"/><circle cx="126.8" cy="138.6" r="1.6"/><circle cx="131.4" cy="138.6" r="1.6"/><circle cx="127.6" cy="144.2" r="1.6"/><circle cx="127.6" cy="152.6" r="1.6"/><circle cx="129.1" cy="155.2" r="1.6"/><circle cx="158.2" cy="124.2" r="1.6"/><circle cx="156.3" cy="129.5" r="1.6"/><circle cx="145.7" cy="157.5" r="1.6"/><circle cx="166.6" cy="111.7" r="1.6"/><circle cx="175.7" cy="114.3" r="1.6"/><circle cx="174.1" cy="118.5" r="1.6"/><circle cx="170.4" cy="121.5" r="1.6"/><circle cx="165.4" cy="122.7" r="1.6"/><circle cx="160.5" cy="123.4" r="1.6"/><circle cx="162.0" cy="126.4" r="1.6"/><circle cx="167.7" cy="127.2" r="1.6"/><circle cx="170.0" cy="130.6" r="1.6"/><circle cx="199.5" cy="109.4" r="1.6"/><circle cx="186.6" cy="142.3" r="1.6"/><circle cx="178.3" cy="144.2" r="1.6"/><circle cx="199.1" cy="138.9" r="1.6"/><circle cx="197.6" cy="142.3" r="1.6"/><circle cx="200.6" cy="141.6" r="1.6"/><circle cx="180.2" cy="149.1" r="1.6"/><circle cx="183.2" cy="151.4" r="1.6"/><circle cx="182.5" cy="154.1" r="1.6"/><circle cx="184.0" cy="156.3" r="1.6"/><circle cx="208.6" cy="149.1" r="1.6"/><circle cx="192.3" cy="148.0" r="1.6"/><circle cx="195.3" cy="151.4" r="1.6"/><circle cx="109.8" cy="173.0" r="1.6"/><circle cx="112.8" cy="172.6" r="1.6"/><circle cx="115.5" cy="174.1" r="1.6"/><circle cx="118.5" cy="174.5" r="1.6"/><circle cx="121.9" cy="173.8" r="1.6"/><circle cx="122.7" cy="175.3" r="1.6"/><circle cx="126.1" cy="173.0" r="1.6"/><circle cx="128.3" cy="169.6" r="1.6"/><circle cx="131.7" cy="167.3" r="1.6"/><circle cx="138.9" cy="167.3" r="1.6"/><circle cx="110.2" cy="177.2" r="1.6"/><circle cx="123.8" cy="177.9" r="1.6"/><circle cx="107.1" cy="181.7" r="1.6"/><circle cx="108.6" cy="183.2" r="1.6"/><circle cx="140.8" cy="175.3" r="1.6"/><circle cx="145.4" cy="175.3" r="1.6"/><circle cx="149.9" cy="174.1" r="1.6"/><circle cx="150.7" cy="177.2" r="1.6"/><circle cx="152.2" cy="179.1" r="1.6"/><circle cx="144.2" cy="179.8" r="1.6"/><circle cx="145.7" cy="181.3" r="1.6"/><circle cx="152.2" cy="182.1" r="1.6"/><circle cx="153.3" cy="184.0" r="1.6"/><circle cx="135.1" cy="182.8" r="1.6"/><circle cx="132.5" cy="186.3" r="1.6"/><circle cx="137.0" cy="187.4" r="1.6"/><circle cx="135.9" cy="188.9" r="1.6"/><circle cx="141.6" cy="188.5" r="1.6"/><circle cx="145.7" cy="190.0" r="1.6"/><circle cx="110.5" cy="189.3" r="1.6"/><circle cx="113.9" cy="190.8" r="1.6"/><circle cx="115.5" cy="192.3" r="1.6"/><circle cx="108.3" cy="195.0" r="1.6"/><circle cx="121.1" cy="199.9" r="1.6"/><circle cx="107.5" cy="203.3" r="1.6"/><circle cx="114.3" cy="203.3" r="1.6"/><circle cx="115.5" cy="205.2" r="1.6"/><circle cx="121.9" cy="204.4" r="1.6"/><circle cx="122.3" cy="206.7" r="1.6"/><circle cx="126.4" cy="203.3" r="1.6"/><circle cx="129.5" cy="204.4" r="1.6"/><circle cx="132.5" cy="203.3" r="1.6"/><circle cx="131.0" cy="204.8" r="1.6"/><circle cx="134.4" cy="196.9" r="1.6"/><circle cx="136.7" cy="197.6" r="1.6"/><circle cx="153.7" cy="196.1" r="1.6"/><circle cx="155.6" cy="195.7" r="1.6"/><circle cx="153.3" cy="159.8" r="1.6"/><circle cx="126.4" cy="211.2" r="1.6"/><circle cx="173.0" cy="159.4" r="1.6"/><circle cx="179.1" cy="159.8" r="1.6"/><circle cx="179.1" cy="166.6" r="1.6"/><circle cx="182.5" cy="165.1" r="1.6"/><circle cx="165.4" cy="171.5" r="1.6"/><circle cx="171.9" cy="173.8" r="1.6"/><circle cx="179.1" cy="172.6" r="1.6"/><circle cx="162.0" cy="177.2" r="1.6"/><circle cx="172.6" cy="177.2" r="1.6"/><circle cx="175.3" cy="179.1" r="1.6"/><circle cx="163.5" cy="182.5" r="1.6"/><circle cx="163.5" cy="187.0" r="1.6"/><circle cx="163.5" cy="189.7" r="1.6"/><circle cx="170.4" cy="187.8" r="1.6"/><circle cx="174.9" cy="185.1" r="1.6"/><circle cx="209.3" cy="199.9" r="1.6"/><circle cx="170.4" cy="203.3" r="1.6"/><circle cx="176.4" cy="205.6" r="1.6"/><circle cx="179.1" cy="202.5" r="1.6"/><circle cx="171.1" cy="210.5" r="1.6"/><circle cx="173.0" cy="209.3" r="1.6"/><circle cx="126.4" cy="212.8" r="1.6"/><circle cx="143.1" cy="214.3" r="1.6"/><circle cx="154.5" cy="213.8" r="1.6"/><circle cx="138.6" cy="216.2" r="1.6"/><circle cx="126.4" cy="218.4" r="1.6"/><circle cx="137.8" cy="219.6" r="1.6"/><circle cx="142.3" cy="218.1" r="1.6"/><circle cx="149.9" cy="220.3" r="1.6"/><circle cx="155.2" cy="216.5" r="1.6"/><circle cx="159.8" cy="219.6" r="1.6"/><circle cx="165.8" cy="221.1" r="1.6"/><circle cx="176.9" cy="221.1" r="1.6"/><circle cx="138.6" cy="223.4" r="1.6"/><circle cx="152.9" cy="222.6" r="1.6"/><circle cx="150.7" cy="225.9" r="1.6"/><circle cx="107.5" cy="227.9" r="1.6"/><circle cx="126.9" cy="229.4" r="1.6"/><circle cx="132.5" cy="231.7" r="1.6"/><circle cx="140.1" cy="230.5" r="1.6"/><circle cx="143.9" cy="231.7" r="1.6"/><circle cx="146.1" cy="233.2" r="1.6"/><circle cx="152.9" cy="229.9" r="1.6"/><circle cx="154.2" cy="233.2" r="1.6"/><circle cx="114.3" cy="236.2" r="1.6"/><circle cx="111.3" cy="239.3" r="1.6"/><circle cx="109.8" cy="241.5" r="1.6"/><circle cx="125.7" cy="238.0" r="1.6"/><circle cx="134.0" cy="240.5" r="1.6"/><circle cx="149.2" cy="239.6" r="1.6"/><circle cx="143.1" cy="244.1" r="1.6"/><circle cx="148.4" cy="243.8" r="1.6"/><circle cx="153.7" cy="243.0" r="1.6"/><circle cx="143.9" cy="248.0" r="1.6"/><circle cx="139.3" cy="249.1" r="1.6"/><circle cx="168.4" cy="240.5" r="1.6"/><circle cx="173.4" cy="245.0" r="1.6"/><circle cx="174.9" cy="246.5" r="1.6"/><circle cx="176.4" cy="248.0" r="1.6"/><circle cx="178.4" cy="249.6" r="1.6"/><circle cx="181.0" cy="251.7" r="1.6"/><circle cx="140.1" cy="273.3" r="1.6"/><circle cx="143.9" cy="274.1" r="1.6"/><circle cx="151.4" cy="275.3" r="1.6"/><circle cx="134.5" cy="285.4" r="1.6"/><circle cx="141.6" cy="288.0" r="1.6"/><circle cx="145.8" cy="284.4" r="1.6"/><circle cx="114.3" cy="297.6" r="1.6"/><circle cx="138.6" cy="297.1" r="1.6"/><circle cx="140.8" cy="298.6" r="1.6"/><circle cx="142.0" cy="299.8" r="1.6"/><circle cx="146.9" cy="301.3" r="1.6"/><circle cx="148.4" cy="303.6" r="1.6"/><circle cx="151.4" cy="301.3" r="1.6"/><circle cx="155.2" cy="301.6" r="1.6"/><circle cx="167.3" cy="301.6" r="1.6"/><circle cx="170.4" cy="301.6" r="1.6"/><circle cx="143.1" cy="306.6" r="1.6"/><circle cx="138.6" cy="311.9" r="1.6"/><circle cx="182.5" cy="299.8" r="1.6"/><circle cx="185.5" cy="301.3" r="1.6"/><circle cx="188.5" cy="304.4" r="1.6"/><circle cx="190.8" cy="303.6" r="1.6"/><circle cx="194.6" cy="305.9" r="1.6"/><circle cx="108.3" cy="361.6" r="1.6"/><circle cx="112.1" cy="361.6" r="1.6"/><circle cx="106.8" cy="372.8" r="1.6"/><circle cx="108.7" cy="378.6" r="1.6"/><circle cx="109.3" cy="380.4" r="1.6"/><circle cx="106.8" cy="384.3" r="1.6"/><circle cx="216.2" cy="107.1" r="1.6"/><circle cx="219.6" cy="109.4" r="1.6"/><circle cx="221.1" cy="110.2" r="1.6"/><circle cx="219.2" cy="111.3" r="1.6"/><circle cx="223.4" cy="115.8" r="1.6"/><circle cx="225.6" cy="115.1" r="1.6"/><circle cx="226.8" cy="116.6" r="1.6"/><circle cx="224.5" cy="118.1" r="1.6"/><circle cx="215.4" cy="121.9" r="1.6"/><circle cx="216.9" cy="118.5" r="1.6"/><circle cx="223.7" cy="123.0" r="1.6"/><circle cx="226.0" cy="124.2" r="1.6"/><circle cx="230.5" cy="123.4" r="1.6"/><circle cx="232.4" cy="121.9" r="1.6"/><circle cx="234.7" cy="120.8" r="1.6"/><circle cx="236.2" cy="120.0" r="1.6"/><circle cx="242.7" cy="120.0" r="1.6"/><circle cx="243.8" cy="124.2" r="1.6"/><circle cx="243.8" cy="125.7" r="1.6"/><circle cx="250.2" cy="121.5" r="1.6"/><circle cx="254.4" cy="111.7" r="1.6"/><circle cx="255.9" cy="111.7" r="1.6"/><circle cx="257.8" cy="115.1" r="1.6"/><circle cx="260.1" cy="117.0" r="1.6"/><circle cx="257.8" cy="118.9" r="1.6"/><circle cx="262.7" cy="121.9" r="1.6"/><circle cx="260.8" cy="124.2" r="1.6"/><circle cx="261.2" cy="127.2" r="1.6"/><circle cx="260.4" cy="131.7" r="1.6"/><circle cx="262.3" cy="133.6" r="1.6"/><circle cx="258.6" cy="136.3" r="1.6"/><circle cx="254.0" cy="134.0" r="1.6"/><circle cx="253.3" cy="136.3" r="1.6"/><circle cx="251.4" cy="132.5" r="1.6"/><circle cx="234.7" cy="126.4" r="1.6"/><circle cx="234.7" cy="130.2" r="1.6"/><circle cx="233.2" cy="132.9" r="1.6"/><circle cx="240.0" cy="137.0" r="1.6"/><circle cx="243.8" cy="131.0" r="1.6"/><circle cx="245.7" cy="139.7" r="1.6"/><circle cx="244.6" cy="143.1" r="1.6"/><circle cx="238.9" cy="143.5" r="1.6"/><circle cx="224.9" cy="141.6" r="1.6"/><circle cx="224.9" cy="144.2" r="1.6"/><circle cx="229.8" cy="143.9" r="1.6"/><circle cx="229.4" cy="146.1" r="1.6"/><circle cx="232.8" cy="147.3" r="1.6"/><circle cx="219.9" cy="146.9" r="1.6"/><circle cx="221.5" cy="148.4" r="1.6"/><circle cx="223.0" cy="150.3" r="1.6"/><circle cx="226.8" cy="152.6" r="1.6"/><circle cx="216.5" cy="144.6" r="1.6"/><circle cx="213.5" cy="148.0" r="1.6"/><circle cx="213.9" cy="142.3" r="1.6"/><circle cx="219.9" cy="134.4" r="1.6"/><circle cx="240.8" cy="147.3" r="1.6"/><circle cx="238.5" cy="151.4" r="1.6"/><circle cx="234.7" cy="150.7" r="1.6"/><circle cx="249.1" cy="151.4" r="1.6"/><circle cx="255.1" cy="157.5" r="1.6"/><circle cx="265.4" cy="130.6" r="1.6"/><circle cx="274.8" cy="137.0" r="1.6"/><circle cx="284.3" cy="138.2" r="1.6"/><circle cx="284.3" cy="140.1" r="1.6"/><circle cx="290.0" cy="137.0" r="1.6"/><circle cx="292.6" cy="134.4" r="1.6"/><circle cx="291.9" cy="138.6" r="1.6"/><circle cx="289.2" cy="145.0" r="1.6"/><circle cx="266.5" cy="141.2" r="1.6"/><circle cx="265.8" cy="144.2" r="1.6"/><circle cx="271.4" cy="143.5" r="1.6"/><circle cx="221.1" cy="159.8" r="1.6"/><circle cx="229.4" cy="173.0" r="1.6"/><circle cx="224.9" cy="176.0" r="1.6"/><circle cx="238.9" cy="177.2" r="1.6"/><circle cx="240.4" cy="179.4" r="1.6"/><circle cx="238.5" cy="181.7" r="1.6"/><circle cx="238.1" cy="183.2" r="1.6"/><circle cx="240.4" cy="184.4" r="1.6"/><circle cx="237.0" cy="186.6" r="1.6"/><circle cx="234.0" cy="190.8" r="1.6"/><circle cx="246.1" cy="180.6" r="1.6"/><circle cx="244.6" cy="182.8" r="1.6"/><circle cx="246.4" cy="185.1" r="1.6"/><circle cx="243.0" cy="189.3" r="1.6"/><circle cx="245.3" cy="189.7" r="1.6"/><circle cx="227.1" cy="192.7" r="1.6"/><circle cx="225.6" cy="196.5" r="1.6"/><circle cx="222.6" cy="196.5" r="1.6"/><circle cx="220.7" cy="196.5" r="1.6"/><circle cx="217.7" cy="198.0" r="1.6"/><circle cx="255.9" cy="174.5" r="1.6"/><circle cx="274.1" cy="164.7" r="1.6"/><circle cx="266.5" cy="190.0" r="1.6"/><circle cx="287.7" cy="206.7" r="1.6"/><circle cx="300.2" cy="208.2" r="1.6"/><circle cx="299.4" cy="187.8" r="1.6"/><circle cx="295.3" cy="211.2" r="1.6"/><circle cx="296.0" cy="213.5" r="1.6"/><circle cx="297.6" cy="212.8" r="1.6"/><circle cx="280.1" cy="256.4" r="1.6"/><circle cx="278.6" cy="262.7" r="1.6"/><circle cx="280.9" cy="266.8" r="1.6"/><circle cx="284.4" cy="267.7" r="1.6"/><circle cx="292.6" cy="289.5" r="1.6"/><circle cx="284.4" cy="294.5" r="1.6"/><circle cx="268.8" cy="298.6" r="1.6"/><circle cx="251.1" cy="301.6" r="1.6"/><circle cx="242.6" cy="304.4" r="1.6"/><circle cx="368.7" cy="290.0" r="1.6"/><circle cx="373.3" cy="292.3" r="1.6"/><circle cx="368.0" cy="294.5" r="1.6"/><circle cx="366.5" cy="296.8" r="1.6"/><circle cx="370.2" cy="295.6" r="1.6"/><circle cx="374.8" cy="296.0" r="1.6"/><circle cx="376.3" cy="296.8" r="1.6"/><circle cx="383.1" cy="292.3" r="1.6"/><circle cx="381.6" cy="296.8" r="1.6"/><circle cx="384.6" cy="296.0" r="1.6"/><circle cx="386.1" cy="299.5" r="1.6"/><circle cx="387.7" cy="301.6" r="1.6"/><circle cx="390.7" cy="299.8" r="1.6"/><circle cx="392.2" cy="296.0" r="1.6"/><circle cx="394.5" cy="296.8" r="1.6"/><circle cx="397.5" cy="296.0" r="1.6"/><circle cx="396.0" cy="299.8" r="1.6"/><circle cx="361.9" cy="300.1" r="1.6"/><circle cx="358.1" cy="302.9" r="1.6"/><circle cx="353.6" cy="305.1" r="1.6"/><circle cx="346.0" cy="310.1" r="1.6"/><circle cx="341.5" cy="313.2" r="1.6"/><circle cx="338.4" cy="315.0" r="1.6"/><circle cx="336.2" cy="316.5" r="1.6"/><circle cx="376.3" cy="304.1" r="1.6"/><circle cx="378.6" cy="305.9" r="1.6"/><circle cx="374.0" cy="308.2" r="1.6"/><circle cx="405.1" cy="305.9" r="1.6"/><circle cx="406.6" cy="308.9" r="1.6"/><circle cx="408.1" cy="311.2" r="1.6"/><circle cx="409.6" cy="312.7" r="1.6"/><circle cx="332.4" cy="319.8" r="1.6"/><circle cx="334.7" cy="318.8" r="1.6"/><circle cx="335.4" cy="323.8" r="1.6"/><circle cx="336.9" cy="325.6" r="1.6"/><circle cx="405.1" cy="321.8" r="1.6"/><circle cx="408.1" cy="321.8" r="1.6"/><circle cx="404.3" cy="319.5" r="1.6"/></g>
<g fill="#10e890"><circle cx="88.6" cy="186.3" r="1.6"/><circle cx="86.3" cy="188.5" r="1.6"/><circle cx="84.0" cy="190.0" r="1.6"/><circle cx="82.5" cy="192.3" r="1.6"/><circle cx="80.3" cy="194.6" r="1.6"/><circle cx="79.5" cy="196.9" r="1.6"/><circle cx="79.5" cy="201.1" r="1.6"/><circle cx="84.0" cy="210.5" r="1.6"/><circle cx="84.0" cy="212.8" r="1.6"/><circle cx="84.5" cy="217.8" r="1.6"/><circle cx="115.8" cy="124.9" r="1.6"/><circle cx="117.4" cy="126.4" r="1.6"/><circle cx="119.6" cy="128.3" r="1.6"/><circle cx="208.2" cy="111.7" r="1.6"/><circle cx="210.5" cy="111.3" r="1.6"/><circle cx="209.0" cy="114.3" r="1.6"/><circle cx="204.4" cy="132.9" r="1.6"/><circle cx="208.2" cy="132.5" r="1.6"/><circle cx="204.4" cy="136.7" r="1.6"/><circle cx="210.5" cy="139.3" r="1.6"/><circle cx="202.1" cy="142.7" r="1.6"/><circle cx="204.4" cy="142.3" r="1.6"/><circle cx="207.4" cy="143.1" r="1.6"/><circle cx="202.1" cy="146.9" r="1.6"/><circle cx="204.4" cy="146.9" r="1.6"/><circle cx="202.9" cy="148.8" r="1.6"/><circle cx="196.9" cy="151.4" r="1.6"/><circle cx="198.4" cy="151.8" r="1.6"/><circle cx="195.3" cy="154.4" r="1.6"/><circle cx="193.1" cy="156.0" r="1.6"/><circle cx="196.9" cy="156.0" r="1.6"/><circle cx="189.3" cy="159.4" r="1.6"/><circle cx="213.1" cy="115.8" r="1.6"/><circle cx="219.6" cy="118.9" r="1.6"/><circle cx="224.9" cy="128.3" r="1.6"/><circle cx="218.1" cy="132.9" r="1.6"/><circle cx="225.6" cy="134.4" r="1.6"/><circle cx="216.5" cy="138.6" r="1.6"/><circle cx="212.8" cy="140.8" r="1.6"/><circle cx="229.4" cy="118.1" r="1.6"/><circle cx="221.1" cy="136.3" r="1.6"/></g>
<g fill="#1088f2"><circle cx="81.8" cy="304.4" r="1.6"/><circle cx="82.5" cy="308.2" r="1.6"/><circle cx="80.3" cy="302.9" r="1.6"/><circle cx="42.1" cy="368.0" r="1.6"/><circle cx="42.4" cy="370.2" r="1.6"/><circle cx="43.2" cy="372.5" r="1.6"/><circle cx="43.9" cy="374.8" r="1.6"/><circle cx="55.3" cy="343.0" r="1.6"/><circle cx="57.5" cy="342.2" r="1.6"/><circle cx="59.8" cy="341.5" r="1.6"/><circle cx="60.6" cy="343.7" r="1.6"/><circle cx="58.3" cy="345.0" r="1.6"/><circle cx="62.8" cy="344.0" r="1.6"/><circle cx="61.8" cy="349.0" r="1.6"/><circle cx="62.1" cy="351.3" r="1.6"/><circle cx="65.1" cy="350.1" r="1.6"/><circle cx="67.8" cy="351.0" r="1.6"/><circle cx="65.1" cy="360.7" r="1.6"/><circle cx="66.6" cy="363.4" r="1.6"/><circle cx="69.7" cy="369.5" r="1.6"/><circle cx="76.5" cy="377.8" r="1.6"/><circle cx="78.7" cy="378.6" r="1.6"/><circle cx="73.4" cy="401.0" r="1.6"/><circle cx="75.7" cy="400.5" r="1.6"/><circle cx="78.0" cy="401.6" r="1.6"/><circle cx="75.0" cy="402.8" r="1.6"/><circle cx="84.8" cy="396.0" r="1.6"/><circle cx="86.3" cy="396.0" r="1.6"/><circle cx="93.9" cy="399.8" r="1.6"/><circle cx="104.5" cy="383.1" r="1.6"/><circle cx="134.0" cy="235.5" r="1.6"/><circle cx="136.3" cy="235.5" r="1.6"/><circle cx="129.5" cy="240.0" r="1.6"/><circle cx="128.0" cy="243.0" r="1.6"/><circle cx="127.2" cy="248.0" r="1.6"/><circle cx="128.7" cy="248.0" r="1.6"/><circle cx="142.0" cy="263.5" r="1.6"/><circle cx="146.9" cy="266.5" r="1.6"/><circle cx="146.1" cy="269.2" r="1.6"/><circle cx="147.6" cy="270.3" r="1.6"/><circle cx="145.1" cy="271.0" r="1.6"/><circle cx="266.5" cy="160.5" r="1.6"/><circle cx="268.0" cy="161.6" r="1.6"/><circle cx="271.4" cy="163.9" r="1.6"/><circle cx="268.4" cy="167.3" r="1.6"/><circle cx="266.1" cy="172.2" r="1.6"/><circle cx="268.0" cy="171.5" r="1.6"/><circle cx="268.4" cy="175.3" r="1.6"/><circle cx="268.0" cy="180.2" r="1.6"/><circle cx="296.8" cy="187.4" r="1.6"/><circle cx="300.2" cy="170.4" r="1.6"/><circle cx="311.6" cy="179.4" r="1.6"/><circle cx="323.3" cy="165.0" r="1.6"/><circle cx="323.3" cy="167.3" r="1.6"/><circle cx="321.8" cy="172.6" r="1.6"/><circle cx="326.3" cy="171.1" r="1.6"/><circle cx="327.8" cy="173.4" r="1.6"/><circle cx="321.0" cy="175.7" r="1.6"/><circle cx="324.1" cy="176.4" r="1.6"/><circle cx="320.3" cy="178.4" r="1.6"/><circle cx="333.6" cy="173.8" r="1.6"/><circle cx="329.4" cy="178.7" r="1.6"/><circle cx="327.1" cy="180.2" r="1.6"/><circle cx="331.6" cy="182.5" r="1.6"/><circle cx="333.6" cy="185.0" r="1.6"/><circle cx="331.3" cy="189.3" r="1.6"/><circle cx="340.4" cy="196.5" r="1.6"/><circle cx="342.5" cy="198.7" r="1.6"/><circle cx="344.0" cy="200.6" r="1.6"/><circle cx="345.6" cy="202.5" r="1.6"/><circle cx="393.0" cy="314.2" r="1.6"/><circle cx="395.2" cy="316.5" r="1.6"/><circle cx="402.8" cy="316.5" r="1.6"/><circle cx="394.5" cy="319.5" r="1.6"/><circle cx="397.5" cy="321.0" r="1.6"/></g>
<g fill="#10b4f2"><circle cx="84.0" cy="311.2" r="1.6"/><circle cx="74.2" cy="367.2" r="1.6"/><circle cx="81.5" cy="386.1" r="1.6"/><circle cx="146.5" cy="121.5" r="1.6"/><circle cx="151.4" cy="115.1" r="1.6"/><circle cx="151.4" cy="123.0" r="1.6"/><circle cx="154.1" cy="121.9" r="1.6"/><circle cx="149.9" cy="128.0" r="1.6"/><circle cx="150.7" cy="129.5" r="1.6"/><circle cx="158.2" cy="112.4" r="1.6"/><circle cx="154.8" cy="145.0" r="1.6"/><circle cx="155.2" cy="151.4" r="1.6"/><circle cx="155.2" cy="154.4" r="1.6"/><circle cx="156.7" cy="156.7" r="1.6"/><circle cx="158.2" cy="147.6" r="1.6"/><circle cx="198.4" cy="132.5" r="1.6"/><circle cx="201.4" cy="132.9" r="1.6"/><circle cx="190.0" cy="136.7" r="1.6"/><circle cx="193.1" cy="136.7" r="1.6"/><circle cx="192.3" cy="138.2" r="1.6"/><circle cx="170.4" cy="151.4" r="1.6"/><circle cx="161.3" cy="151.4" r="1.6"/><circle cx="160.1" cy="113.2" r="1.6"/><circle cx="165.1" cy="119.6" r="1.6"/><circle cx="200.6" cy="126.8" r="1.6"/><circle cx="205.9" cy="120.8" r="1.6"/><circle cx="146.9" cy="181.7" r="1.6"/><circle cx="154.4" cy="182.1" r="1.6"/><circle cx="152.2" cy="184.0" r="1.6"/><circle cx="152.2" cy="189.3" r="1.6"/><circle cx="158.2" cy="171.5" r="1.6"/><circle cx="161.3" cy="167.3" r="1.6"/><circle cx="164.3" cy="165.4" r="1.6"/><circle cx="167.7" cy="166.6" r="1.6"/><circle cx="159.8" cy="171.5" r="1.6"/><circle cx="170.4" cy="172.2" r="1.6"/><circle cx="176.4" cy="170.4" r="1.6"/><circle cx="177.2" cy="166.2" r="1.6"/><circle cx="181.0" cy="165.8" r="1.6"/><circle cx="162.0" cy="159.8" r="1.6"/><circle cx="218.4" cy="128.3" r="1.6"/><circle cx="232.4" cy="127.2" r="1.6"/><circle cx="237.7" cy="128.0" r="1.6"/><circle cx="240.0" cy="131.0" r="1.6"/><circle cx="241.5" cy="134.0" r="1.6"/><circle cx="245.3" cy="132.1" r="1.6"/><circle cx="246.8" cy="136.3" r="1.6"/><circle cx="249.1" cy="135.5" r="1.6"/><circle cx="248.3" cy="140.1" r="1.6"/><circle cx="250.6" cy="142.3" r="1.6"/><circle cx="251.7" cy="145.4" r="1.6"/><circle cx="256.7" cy="130.2" r="1.6"/><circle cx="221.8" cy="137.0" r="1.6"/><circle cx="213.5" cy="139.3" r="1.6"/><circle cx="229.4" cy="119.6" r="1.6"/><circle cx="302.5" cy="153.3" r="1.6"/><circle cx="303.2" cy="153.7" r="1.6"/><circle cx="301.7" cy="154.8" r="1.6"/><circle cx="315.7" cy="158.2" r="1.6"/><circle cx="307.4" cy="163.2" r="1.6"/><circle cx="316.1" cy="177.9" r="1.6"/><circle cx="312.3" cy="185.1" r="1.6"/><circle cx="314.2" cy="184.4" r="1.6"/><circle cx="302.9" cy="191.6" r="1.6"/><circle cx="305.9" cy="190.0" r="1.6"/><circle cx="308.1" cy="190.0" r="1.6"/><circle cx="317.2" cy="159.4" r="1.6"/><circle cx="318.8" cy="159.8" r="1.6"/><circle cx="322.5" cy="160.5" r="1.6"/><circle cx="324.8" cy="162.0" r="1.6"/><circle cx="321.3" cy="183.2" r="1.6"/><circle cx="326.3" cy="188.5" r="1.6"/><circle cx="335.0" cy="191.6" r="1.6"/><circle cx="329.4" cy="192.3" r="1.6"/><circle cx="332.4" cy="195.3" r="1.6"/></g>
<g fill="#1238f2"><circle cx="71.2" cy="320.3" r="1.6"/><circle cx="82.5" cy="318.8" r="1.6"/><circle cx="65.4" cy="322.5" r="1.6"/><circle cx="62.4" cy="324.8" r="1.6"/><circle cx="57.5" cy="325.6" r="1.6"/><circle cx="80.3" cy="324.8" r="1.6"/><circle cx="52.2" cy="328.6" r="1.6"/><circle cx="56.8" cy="329.4" r="1.6"/><circle cx="52.2" cy="331.6" r="1.6"/><circle cx="54.5" cy="332.4" r="1.6"/><circle cx="47.7" cy="332.4" r="1.6"/><circle cx="58.3" cy="333.9" r="1.6"/><circle cx="71.2" cy="328.9" r="1.6"/><circle cx="73.9" cy="328.9" r="1.6"/><circle cx="78.0" cy="332.4" r="1.6"/><circle cx="78.7" cy="334.7" r="1.6"/><circle cx="74.5" cy="336.2" r="1.6"/><circle cx="77.2" cy="337.7" r="1.6"/><circle cx="75.0" cy="340.7" r="1.6"/><circle cx="78.0" cy="341.5" r="1.6"/><circle cx="42.9" cy="336.9" r="1.6"/><circle cx="66.3" cy="337.4" r="1.6"/><circle cx="68.9" cy="339.2" r="1.6"/><circle cx="70.0" cy="340.4" r="1.6"/><circle cx="66.6" cy="341.9" r="1.6"/><circle cx="43.9" cy="342.2" r="1.6"/><circle cx="45.4" cy="343.0" r="1.6"/><circle cx="47.7" cy="346.0" r="1.6"/><circle cx="51.5" cy="347.5" r="1.6"/><circle cx="48.5" cy="350.6" r="1.6"/><circle cx="39.1" cy="352.5" r="1.6"/><circle cx="44.2" cy="355.9" r="1.6"/><circle cx="49.2" cy="356.6" r="1.6"/><circle cx="53.0" cy="354.3" r="1.6"/><circle cx="55.3" cy="352.5" r="1.6"/><circle cx="52.7" cy="356.6" r="1.6"/><circle cx="56.3" cy="358.1" r="1.6"/><circle cx="40.6" cy="360.1" r="1.6"/><circle cx="48.2" cy="360.1" r="1.6"/><circle cx="67.4" cy="346.0" r="1.6"/><circle cx="73.4" cy="346.5" r="1.6"/><circle cx="68.1" cy="353.1" r="1.6"/><circle cx="71.2" cy="353.6" r="1.6"/><circle cx="85.1" cy="350.1" r="1.6"/><circle cx="82.5" cy="354.0" r="1.6"/><circle cx="84.0" cy="356.2" r="1.6"/><circle cx="75.7" cy="357.4" r="1.6"/><circle cx="78.7" cy="358.9" r="1.6"/><circle cx="81.0" cy="361.2" r="1.6"/><circle cx="78.0" cy="363.4" r="1.6"/><circle cx="82.5" cy="363.4" r="1.6"/><circle cx="85.6" cy="359.6" r="1.6"/><circle cx="95.7" cy="357.1" r="1.6"/><circle cx="98.4" cy="360.7" r="1.6"/><circle cx="97.7" cy="364.9" r="1.6"/><circle cx="104.5" cy="361.9" r="1.6"/><circle cx="104.5" cy="363.4" r="1.6"/><circle cx="61.3" cy="364.2" r="1.6"/><circle cx="61.3" cy="367.2" r="1.6"/><circle cx="68.9" cy="361.9" r="1.6"/><circle cx="69.7" cy="366.2" r="1.6"/><circle cx="71.9" cy="364.9" r="1.6"/><circle cx="68.1" cy="368.0" r="1.6"/><circle cx="65.1" cy="371.8" r="1.6"/><circle cx="75.4" cy="372.5" r="1.6"/><circle cx="82.5" cy="372.5" r="1.6"/><circle cx="78.7" cy="374.8" r="1.6"/><circle cx="61.8" cy="376.3" r="1.6"/><circle cx="73.9" cy="380.4" r="1.6"/><circle cx="93.9" cy="371.0" r="1.6"/><circle cx="96.2" cy="372.5" r="1.6"/><circle cx="94.6" cy="375.5" r="1.6"/><circle cx="89.3" cy="375.5" r="1.6"/><circle cx="87.8" cy="378.3" r="1.6"/><circle cx="90.9" cy="379.8" r="1.6"/><circle cx="100.7" cy="374.8" r="1.6"/><circle cx="104.5" cy="369.5" r="1.6"/><circle cx="103.0" cy="377.0" r="1.6"/><circle cx="98.4" cy="380.8" r="1.6"/><circle cx="100.7" cy="383.1" r="1.6"/><circle cx="100.7" cy="386.9" r="1.6"/><circle cx="87.1" cy="383.9" r="1.6"/><circle cx="90.9" cy="385.4" r="1.6"/><circle cx="93.1" cy="384.6" r="1.6"/><circle cx="89.3" cy="387.7" r="1.6"/><circle cx="91.6" cy="389.2" r="1.6"/><circle cx="92.7" cy="392.5" r="1.6"/><circle cx="59.8" cy="383.4" r="1.6"/><circle cx="59.8" cy="388.4" r="1.6"/><circle cx="56.0" cy="389.2" r="1.6"/><circle cx="52.2" cy="390.4" r="1.6"/><circle cx="52.2" cy="393.0" r="1.6"/><circle cx="52.2" cy="397.0" r="1.6"/><circle cx="55.7" cy="396.7" r="1.6"/><circle cx="61.3" cy="395.2" r="1.6"/><circle cx="65.9" cy="392.2" r="1.6"/><circle cx="68.9" cy="394.0" r="1.6"/><circle cx="66.3" cy="398.3" r="1.6"/><circle cx="68.9" cy="401.0" r="1.6"/><circle cx="54.2" cy="401.6" r="1.6"/><circle cx="58.3" cy="401.0" r="1.6"/><circle cx="59.8" cy="406.6" r="1.6"/><circle cx="63.9" cy="410.1" r="1.6"/><circle cx="74.2" cy="407.3" r="1.6"/><circle cx="80.0" cy="405.8" r="1.6"/><circle cx="81.8" cy="403.6" r="1.6"/><circle cx="79.5" cy="392.5" r="1.6"/><circle cx="84.0" cy="392.5" r="1.6"/><circle cx="89.3" cy="396.7" r="1.6"/><circle cx="90.5" cy="396.0" r="1.6"/><circle cx="87.8" cy="398.3" r="1.6"/><circle cx="98.4" cy="399.0" r="1.6"/><circle cx="94.6" cy="400.5" r="1.6"/></g>
<g fill="#f014a8"><circle cx="156.3" cy="132.5" r="1.6"/><circle cx="156.0" cy="137.0" r="1.6"/><circle cx="144.6" cy="146.9" r="1.6"/><circle cx="161.3" cy="111.7" r="1.6"/><circle cx="162.8" cy="113.2" r="1.6"/><circle cx="162.0" cy="115.1" r="1.6"/><circle cx="163.9" cy="114.3" r="1.6"/><circle cx="166.6" cy="117.4" r="1.6"/><circle cx="166.2" cy="120.8" r="1.6"/><circle cx="162.0" cy="119.6" r="1.6"/><circle cx="166.9" cy="132.1" r="1.6"/><circle cx="162.8" cy="138.6" r="1.6"/><circle cx="168.1" cy="143.9" r="1.6"/><circle cx="164.3" cy="146.9" r="1.6"/><circle cx="166.2" cy="156.7" r="1.6"/><circle cx="168.8" cy="156.7" r="1.6"/><circle cx="172.6" cy="155.2" r="1.6"/><circle cx="185.5" cy="130.6" r="1.6"/><circle cx="188.1" cy="130.6" r="1.6"/><circle cx="195.3" cy="140.4" r="1.6"/><circle cx="158.6" cy="161.6" r="1.6"/><circle cx="159.8" cy="162.0" r="1.6"/><circle cx="161.3" cy="164.3" r="1.6"/><circle cx="163.5" cy="161.3" r="1.6"/><circle cx="165.8" cy="160.1" r="1.6"/><circle cx="208.6" cy="163.9" r="1.6"/><circle cx="210.5" cy="159.4" r="1.6"/><circle cx="225.6" cy="150.3" r="1.6"/><circle cx="221.8" cy="154.4" r="1.6"/><circle cx="224.1" cy="156.0" r="1.6"/><circle cx="219.2" cy="156.7" r="1.6"/><circle cx="227.1" cy="157.5" r="1.6"/><circle cx="216.2" cy="159.8" r="1.6"/><circle cx="218.8" cy="162.0" r="1.6"/><circle cx="217.3" cy="165.8" r="1.6"/><circle cx="219.9" cy="166.6" r="1.6"/><circle cx="224.1" cy="164.3" r="1.6"/><circle cx="221.5" cy="161.3" r="1.6"/><circle cx="225.6" cy="171.5" r="1.6"/><circle cx="237.4" cy="174.5" r="1.6"/><circle cx="250.2" cy="182.5" r="1.6"/><circle cx="260.4" cy="190.8" r="1.6"/><circle cx="264.2" cy="196.1" r="1.6"/><circle cx="264.2" cy="199.1" r="1.6"/><circle cx="265.8" cy="196.1" r="1.6"/><circle cx="268.0" cy="196.5" r="1.6"/><circle cx="266.5" cy="198.7" r="1.6"/><circle cx="270.7" cy="198.7" r="1.6"/><circle cx="269.5" cy="200.6" r="1.6"/><circle cx="277.9" cy="197.2" r="1.6"/><circle cx="287.0" cy="209.0" r="1.6"/><circle cx="290.0" cy="211.2" r="1.6"/><circle cx="304.0" cy="208.2" r="1.6"/><circle cx="306.6" cy="209.0" r="1.6"/><circle cx="296.0" cy="215.8" r="1.6"/><circle cx="298.3" cy="216.5" r="1.6"/><circle cx="296.0" cy="221.8" r="1.6"/><circle cx="302.9" cy="219.6" r="1.6"/><circle cx="305.9" cy="221.1" r="1.6"/><circle cx="308.9" cy="218.8" r="1.6"/><circle cx="311.9" cy="216.5" r="1.6"/><circle cx="307.4" cy="213.5" r="1.6"/><circle cx="311.2" cy="224.1" r="1.6"/><circle cx="317.2" cy="230.9" r="1.6"/></g>
<g fill="#b010ec"><circle cx="199.9" cy="280.1" r="1.6"/><circle cx="205.9" cy="287.0" r="1.6"/><circle cx="206.7" cy="288.5" r="1.6"/><circle cx="209.0" cy="291.5" r="1.6"/><circle cx="211.2" cy="292.3" r="1.6"/><circle cx="201.4" cy="299.8" r="1.6"/><circle cx="193.1" cy="308.9" r="1.6"/><circle cx="194.6" cy="311.9" r="1.6"/><circle cx="200.6" cy="310.4" r="1.6"/><circle cx="206.7" cy="312.7" r="1.6"/><circle cx="209.0" cy="308.2" r="1.6"/><circle cx="217.3" cy="296.8" r="1.6"/><circle cx="222.6" cy="296.0" r="1.6"/><circle cx="225.6" cy="296.0" r="1.6"/><circle cx="224.1" cy="298.3" r="1.6"/><circle cx="229.4" cy="298.6" r="1.6"/><circle cx="233.2" cy="299.5" r="1.6"/><circle cx="238.5" cy="299.5" r="1.6"/><circle cx="243.0" cy="298.6" r="1.6"/><circle cx="244.6" cy="298.6" r="1.6"/><circle cx="223.4" cy="302.5" r="1.6"/><circle cx="226.4" cy="302.5" r="1.6"/><circle cx="212.8" cy="301.3" r="1.6"/><circle cx="212.8" cy="292.3" r="1.6"/><circle cx="216.5" cy="305.1" r="1.6"/><circle cx="219.6" cy="305.6" r="1.6"/><circle cx="224.1" cy="305.9" r="1.6"/><circle cx="214.3" cy="308.9" r="1.6"/><circle cx="216.5" cy="310.4" r="1.6"/><circle cx="218.8" cy="310.4" r="1.6"/><circle cx="215.0" cy="312.7" r="1.6"/><circle cx="218.1" cy="316.5" r="1.6"/></g>
</svg>
<!--/DOTS-->

</div></body></html>
